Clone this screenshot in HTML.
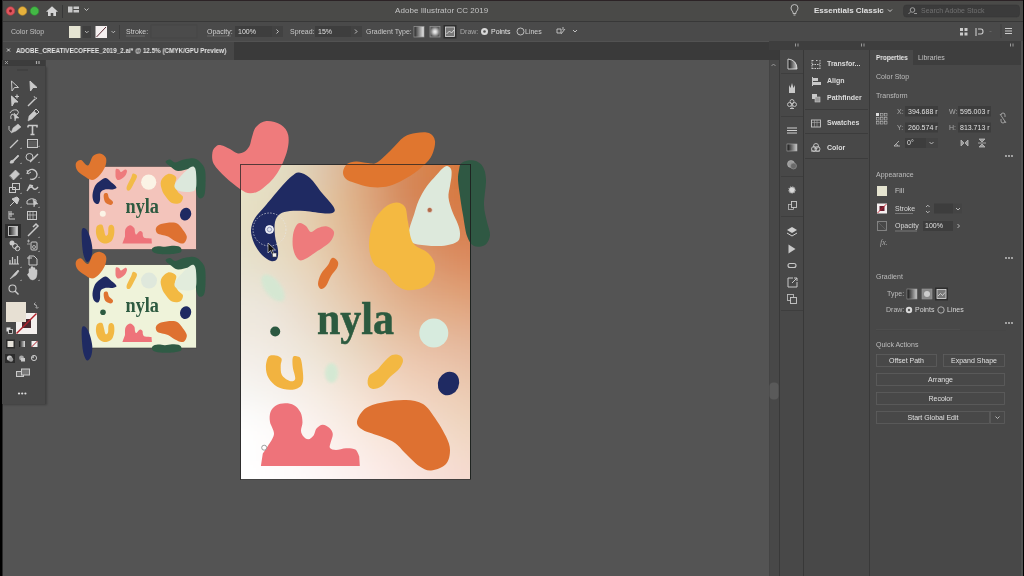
<!DOCTYPE html>
<html><head><meta charset="utf-8">
<style>
*{margin:0;padding:0;box-sizing:border-box}
html,body{width:1024px;height:576px;overflow:hidden;background:#545454;font-family:"Liberation Sans",sans-serif;color:#d8d8d8}
.a{position:absolute}
.t{position:absolute;white-space:nowrap;font-size:7px;line-height:8px;-webkit-font-smoothing:antialiased;will-change:transform}
</style></head><body>
<!-- title bar -->
<div class="a" style="left:0;top:0;width:1024px;height:21px;background:#4a4a48;border-top:1px solid #2c2326"></div>
<div class="a" style="left:0;top:21px;width:1024px;height:1px;background:#383838"></div>
<!-- control bar -->
<div class="a" style="left:0;top:22px;width:1024px;height:20px;background:#4a4a4a"></div><div class="a" style="left:0;top:40.5px;width:1024px;height:1px;background:#525252"></div>
<!-- tab bar -->
<div class="a" style="left:0;top:42px;width:1024px;height:18px;background:#3a3a3a"></div>
<div class="a" style="left:0;top:42px;width:234px;height:18px;background:#474747"></div>
<!-- left black strip -->
<div class="a" style="left:0;top:0;width:1.5px;height:576px;background:#000"></div><div class="a" style="left:1.5px;top:0;width:1px;height:576px;background:#2a2a2a"></div>

<!-- right side -->
<div class="a" style="left:768.5px;top:41px;width:255.5px;height:9px;background:#3e3e3e"></div>
<div class="a" style="left:768.5px;top:60px;width:10.5px;height:516px;background:#484848"></div>
<div class="a" style="left:768.5px;top:60px;width:1px;height:516px;background:#444"></div>
<div class="a" style="left:779px;top:50px;width:1px;height:526px;background:#393939"></div>
<div class="a" style="left:780px;top:50px;width:23px;height:526px;background:#484848"></div>
<div class="a" style="left:803px;top:50px;width:1px;height:526px;background:#383838"></div>
<div class="a" style="left:804px;top:50px;width:65px;height:526px;background:#484848"></div>
<div class="a" style="left:869px;top:50px;width:1px;height:526px;background:#393939"></div>
<div class="a" style="left:870px;top:50px;width:151px;height:526px;background:#484848"></div>
<div class="a" style="left:1021px;top:41px;width:1.5px;height:535px;background:#525252"></div>
<div class="a" style="left:1022.5px;top:0;width:1.5px;height:576px;background:#000"></div>
<div class="a" style="left:870px;top:50px;width:151px;height:15px;background:#3e3e3e"></div>
<div class="a" style="left:870px;top:50px;width:43px;height:15px;background:#484848"></div>
<!--ART--><svg class="a" style="left:0;top:0;will-change:transform" width="768" height="576" viewBox="0 0 768 576"><rect x="88.8" y="166.3" width="107.6" height="83.3" fill="#f3c4bb"/>
<rect x="88.8" y="166.3" width="107.6" height="83.3" fill="none" stroke="#3a3a3a" stroke-width="0.6"/>
<path d="M165.6,162.0 C165.4,160.8 168.4,159.4 170.0,159.5 C171.6,159.6 173.0,162.4 175.0,162.5 C177.0,162.6 179.5,160.7 182.0,160.0 C184.5,159.3 187.7,158.7 190.0,158.5 C192.3,158.3 194.2,158.2 196.0,159.0 C197.8,159.8 199.5,161.2 201.0,163.0 C202.5,164.8 204.2,166.3 205.0,170.0 C205.8,173.7 205.7,180.7 205.5,185.0 C205.3,189.3 205.1,193.8 204.0,196.0 C202.9,198.2 200.3,199.0 199.0,198.0 C197.7,197.0 196.6,194.3 196.0,190.0 C195.4,185.7 196.5,175.5 195.5,172.0 C194.5,168.5 192.9,169.2 190.0,169.0 C187.1,168.8 181.2,171.3 178.0,171.0 C174.8,170.7 173.1,168.5 171.0,167.0 C168.9,165.5 165.8,163.2 165.6,162.0Z" fill="#2f5b45"/>
<path d="M76.0,163.0 C76.7,161.3 79.0,159.6 81.0,160.0 C83.0,160.4 86.0,166.2 88.0,165.5 C90.0,164.8 91.0,158.0 93.0,156.0 C95.0,154.0 97.8,153.2 100.0,153.5 C102.2,153.8 105.2,155.8 106.0,158.0 C106.8,160.2 106.2,164.0 105.0,167.0 C103.8,170.0 101.2,173.8 99.0,176.0 C96.8,178.2 94.5,180.0 92.0,180.0 C89.5,180.0 86.5,177.7 84.0,176.0 C81.5,174.3 78.3,172.2 77.0,170.0 C75.7,167.8 75.3,164.7 76.0,163.0Z" fill="#e0762f"/>
<path d="M105.8,178.0 C107.6,178.2 109.2,180.4 111.0,182.0 C112.8,183.6 116.3,186.2 116.5,187.5 C116.7,188.8 113.9,189.2 112.0,189.5 C110.1,189.8 106.9,189.0 105.0,189.5 C103.1,190.0 101.3,190.8 100.5,192.5 C99.7,194.2 100.4,198.1 100.0,200.0 C99.6,201.9 99.0,203.7 98.0,204.0 C97.0,204.3 94.9,203.5 94.0,202.0 C93.1,200.5 92.3,197.7 92.5,195.0 C92.7,192.3 93.8,188.3 95.0,186.0 C96.2,183.7 98.2,182.3 100.0,181.0 C101.8,179.7 104.0,177.8 105.8,178.0Z" fill="#1f2a62"/>
<path d="M104.0,194.0 C104.6,193.1 106.7,192.8 107.5,193.5 C108.3,194.2 108.1,196.6 109.0,198.0 C109.9,199.4 112.7,200.8 113.0,202.0 C113.3,203.2 112.2,204.8 111.0,205.0 C109.8,205.2 107.2,204.0 106.0,203.0 C104.8,202.0 104.3,200.5 104.0,199.0 C103.7,197.5 103.4,194.9 104.0,194.0Z" fill="#df7331"/>
<path d="M116.0,169.0 C116.6,168.4 118.2,169.0 119.0,169.5 C119.8,170.0 120.0,172.0 121.0,172.0 C122.0,172.0 124.0,169.7 125.0,169.5 C126.0,169.3 127.0,169.9 127.0,171.0 C127.0,172.1 126.3,174.5 125.0,176.0 C123.7,177.5 120.5,179.7 119.0,180.0 C117.5,180.3 116.6,179.2 116.0,178.0 C115.4,176.8 115.5,174.5 115.5,173.0 C115.5,171.5 115.4,169.6 116.0,169.0Z" fill="#ee7b7c"/>
<path d="M133.0,173.5 C134.0,173.2 136.8,174.4 137.0,176.0 C137.2,177.6 135.2,180.7 134.0,183.0 C132.8,185.3 131.2,188.8 130.0,190.0 C128.8,191.2 127.5,190.7 127.0,190.0 C126.5,189.3 126.3,188.0 127.0,186.0 C127.7,184.0 130.0,180.1 131.0,178.0 C132.0,175.9 132.0,173.8 133.0,173.5Z" fill="#f2bb48"/>
<circle cx="148.7" cy="182.2" r="7.6" fill="#fbf4e6"/>
<path d="M168.0,174.0 C170.5,173.3 174.8,175.2 176.0,177.0 C177.2,178.8 174.7,182.5 175.0,185.0 C175.3,187.5 176.7,190.0 178.0,192.0 C179.3,194.0 182.7,195.2 183.0,197.0 C183.3,198.8 181.8,202.0 180.0,203.0 C178.2,204.0 174.3,204.0 172.0,203.0 C169.7,202.0 167.7,199.2 166.0,197.0 C164.3,194.8 162.8,192.7 162.0,190.0 C161.2,187.3 160.0,183.7 161.0,181.0 C162.0,178.3 165.5,174.7 168.0,174.0Z" fill="#f3b942"/>
<path d="M190.0,167.5 C192.5,166.0 193.9,165.9 195.0,168.0 C196.1,170.1 196.4,176.3 196.4,180.0 C196.4,183.7 196.7,188.0 195.0,190.0 C193.3,192.0 189.0,192.0 186.0,192.0 C183.0,192.0 178.9,191.2 177.0,190.0 C175.1,188.8 174.0,187.2 174.5,185.0 C175.0,182.8 177.4,179.9 180.0,177.0 C182.6,174.1 187.5,169.0 190.0,167.5Z" fill="#dce8dc"/>
<text x="125.5" y="213.2" font-family="Liberation Serif" font-weight="bold" font-size="19" fill="#2d5a40" transform="translate(0 213.2) scale(1 1.15) translate(0 -213.2)" textLength="33.5" lengthAdjust="spacingAndGlyphs">nyla</text>
<circle cx="102.8" cy="213.8" r="3" fill="#fbf4e6"/>
<ellipse cx="185.6" cy="214.2" rx="5.5" ry="6.5" fill="#1f2a62" transform="rotate(20 185.6 214.2)"/>
<path d="M97.0,226.0 C98.0,224.6 100.8,224.0 102.0,224.7 C103.2,225.4 103.4,228.2 104.0,230.0 C104.6,231.8 104.8,234.8 105.5,235.5 C106.2,236.2 107.5,235.4 108.0,234.0 C108.5,232.6 108.0,228.6 108.5,227.0 C109.0,225.4 110.1,224.7 111.0,224.7 C111.9,224.7 113.5,225.3 114.0,227.0 C114.5,228.7 114.5,232.6 114.0,235.0 C113.5,237.4 112.7,240.1 111.0,241.5 C109.3,242.9 106.1,243.8 104.0,243.5 C101.9,243.2 99.8,241.8 98.5,240.0 C97.2,238.2 96.2,235.3 96.0,233.0 C95.8,230.7 96.0,227.4 97.0,226.0Z" fill="#f2b843"/>
<path d="M122.4,243.5 L125,236.5 L125.0,236.5 C125.1,235.2 124.7,230.9 125.5,229.0 C126.3,227.1 128.5,225.4 129.9,225.2 C131.3,225.0 133.3,226.8 134.2,228.0 C135.0,229.2 134.7,231.4 135.0,232.5 C135.3,233.6 135.7,234.7 136.3,234.6 C136.9,234.5 137.9,232.6 138.6,232.0 C139.3,231.4 139.9,230.9 140.6,231.0 C141.2,231.1 142.1,231.7 142.5,232.5 C142.9,233.3 142.6,235.1 143.0,236.0 C143.4,236.9 143.6,237.6 145.0,238.0 C146.4,238.4 150.4,238.4 151.5,238.5 L151.9,243.5 Z" fill="#ee737a"/>
<path d="M156.0,228.0 C156.7,226.5 158.4,224.9 161.0,224.0 C163.6,223.1 169.0,222.5 171.8,222.5 C174.6,222.5 176.1,222.8 178.0,224.0 C179.9,225.2 181.5,227.9 183.0,230.0 C184.5,232.1 186.5,234.5 186.8,236.5 C187.1,238.5 185.9,240.8 185.0,242.0 C184.1,243.2 183.1,243.7 181.4,243.5 C179.7,243.3 177.2,242.2 175.0,241.0 C172.8,239.8 170.2,237.5 168.0,236.5 C165.8,235.5 163.8,235.6 162.0,235.0 C160.2,234.4 158.0,234.2 157.0,233.0 C156.0,231.8 155.3,229.5 156.0,228.0Z" fill="#de7131"/>
<path d="M82.0,229.5 C82.7,227.2 84.7,227.8 86.0,229.0 C87.3,230.2 89.0,233.8 90.0,237.0 C91.0,240.2 92.1,244.5 92.3,248.0 C92.5,251.5 91.9,255.7 91.0,258.0 C90.1,260.3 88.2,262.5 87.0,262.0 C85.8,261.5 84.3,258.2 83.5,255.0 C82.7,251.8 82.2,247.2 82.0,243.0 C81.8,238.8 81.3,231.8 82.0,229.5Z" fill="#1f2a62"/>
<path d="M152.4,248.0 C153.2,247.0 155.9,246.4 158.0,246.2 C160.1,246.0 162.7,246.9 165.0,246.8 C167.3,246.7 169.5,245.8 172.0,245.8 C174.5,245.8 178.5,246.0 180.0,247.0 C181.5,248.0 182.3,250.8 181.0,252.0 C179.7,253.2 175.5,253.7 172.0,254.0 C168.5,254.3 163.2,254.3 160.0,254.0 C156.8,253.7 154.3,253.0 153.0,252.0 C151.7,251.0 151.6,249.0 152.4,248.0Z" fill="#2f5b45"/>
<rect x="88.8" y="264.7" width="107.6" height="83.3" fill="#eff3da"/>
<rect x="88.8" y="264.7" width="107.6" height="83.3" fill="none" stroke="#3a3a3a" stroke-width="0.6"/>
<path d="M165.6,260.4 C165.4,259.1 168.4,257.8 170.0,257.9 C171.6,258.0 173.0,260.8 175.0,260.9 C177.0,261.0 179.5,259.1 182.0,258.4 C184.5,257.7 187.7,257.1 190.0,256.9 C192.3,256.7 194.2,256.6 196.0,257.4 C197.8,258.1 199.5,259.6 201.0,261.4 C202.5,263.2 204.2,264.7 205.0,268.4 C205.8,272.1 205.7,279.1 205.5,283.4 C205.3,287.7 205.1,292.2 204.0,294.4 C202.9,296.6 200.3,297.4 199.0,296.4 C197.7,295.4 196.6,292.7 196.0,288.4 C195.4,284.1 196.5,273.9 195.5,270.4 C194.5,266.9 192.9,267.6 190.0,267.4 C187.1,267.2 181.2,269.7 178.0,269.4 C174.8,269.1 173.1,266.9 171.0,265.4 C168.9,263.9 165.8,261.6 165.6,260.4Z" fill="#2f5b45"/>
<path d="M76.0,261.4 C76.7,259.7 79.0,258.0 81.0,258.4 C83.0,258.8 86.0,264.6 88.0,263.9 C90.0,263.2 91.0,256.4 93.0,254.4 C95.0,252.4 97.8,251.6 100.0,251.9 C102.2,252.2 105.2,254.1 106.0,256.4 C106.8,258.6 106.2,262.4 105.0,265.4 C103.8,268.4 101.2,272.2 99.0,274.4 C96.8,276.6 94.5,278.4 92.0,278.4 C89.5,278.4 86.5,276.1 84.0,274.4 C81.5,272.7 78.3,270.6 77.0,268.4 C75.7,266.2 75.3,263.1 76.0,261.4Z" fill="#e0762f"/>
<path d="M105.8,276.4 C107.6,276.6 109.2,278.8 111.0,280.4 C112.8,282.0 116.3,284.6 116.5,285.9 C116.7,287.1 113.9,287.6 112.0,287.9 C110.1,288.2 106.9,287.4 105.0,287.9 C103.1,288.4 101.3,289.1 100.5,290.9 C99.7,292.6 100.4,296.5 100.0,298.4 C99.6,300.3 99.0,302.1 98.0,302.4 C97.0,302.7 94.9,301.9 94.0,300.4 C93.1,298.9 92.3,296.1 92.5,293.4 C92.7,290.7 93.8,286.7 95.0,284.4 C96.2,282.1 98.2,280.7 100.0,279.4 C101.8,278.1 104.0,276.2 105.8,276.4Z" fill="#1f2a62"/>
<path d="M104.0,292.4 C104.6,291.5 106.7,291.2 107.5,291.9 C108.3,292.6 108.1,295.0 109.0,296.4 C109.9,297.8 112.7,299.2 113.0,300.4 C113.3,301.6 112.2,303.2 111.0,303.4 C109.8,303.6 107.2,302.4 106.0,301.4 C104.8,300.4 104.3,298.9 104.0,297.4 C103.7,295.9 103.4,293.3 104.0,292.4Z" fill="#df7331"/>
<path d="M116.0,267.4 C116.6,266.8 118.2,267.4 119.0,267.9 C119.8,268.4 120.0,270.4 121.0,270.4 C122.0,270.4 124.0,268.1 125.0,267.9 C126.0,267.7 127.0,268.3 127.0,269.4 C127.0,270.5 126.3,272.9 125.0,274.4 C123.7,275.9 120.5,278.1 119.0,278.4 C117.5,278.7 116.6,277.6 116.0,276.4 C115.4,275.2 115.5,272.9 115.5,271.4 C115.5,269.9 115.4,268.0 116.0,267.4Z" fill="#ee7b7c"/>
<path d="M133.0,271.9 C134.0,271.6 136.8,272.8 137.0,274.4 C137.2,276.0 135.2,279.1 134.0,281.4 C132.8,283.7 131.2,287.2 130.0,288.4 C128.8,289.6 127.5,289.1 127.0,288.4 C126.5,287.7 126.3,286.4 127.0,284.4 C127.7,282.4 130.0,278.5 131.0,276.4 C132.0,274.3 132.0,272.2 133.0,271.9Z" fill="#f2bb48"/>
<circle cx="149" cy="280.6" r="8" fill="#dfe8dc"/>
<path d="M168.0,272.4 C170.5,271.7 174.8,273.6 176.0,275.4 C177.2,277.2 174.7,280.9 175.0,283.4 C175.3,285.9 176.7,288.4 178.0,290.4 C179.3,292.4 182.7,293.6 183.0,295.4 C183.3,297.2 181.8,300.4 180.0,301.4 C178.2,302.4 174.3,302.4 172.0,301.4 C169.7,300.4 167.7,297.6 166.0,295.4 C164.3,293.2 162.8,291.1 162.0,288.4 C161.2,285.7 160.0,282.1 161.0,279.4 C162.0,276.7 165.5,273.1 168.0,272.4Z" fill="#f3b942"/>
<path d="M190.0,265.9 C192.5,264.4 193.9,264.3 195.0,266.4 C196.1,268.5 196.4,274.7 196.4,278.4 C196.4,282.1 196.7,286.4 195.0,288.4 C193.3,290.4 189.0,290.4 186.0,290.4 C183.0,290.4 178.9,289.6 177.0,288.4 C175.1,287.2 174.0,285.6 174.5,283.4 C175.0,281.2 177.4,278.3 180.0,275.4 C182.6,272.5 187.5,267.4 190.0,265.9Z" fill="#e2ecdc"/>
<text x="125.5" y="311.6" font-family="Liberation Serif" font-weight="bold" font-size="19" fill="#2d5a40" transform="translate(0 311.6) scale(1 1.15) translate(0 -311.6)" textLength="33.5" lengthAdjust="spacingAndGlyphs">nyla</text>
<circle cx="103" cy="312.2" r="2.8" fill="#2d5a40"/>
<ellipse cx="185.6" cy="312.6" rx="5.5" ry="6.5" fill="#1f2a62" transform="rotate(20 185.6 312.6)"/>
<path d="M97.0,324.4 C98.0,323.0 100.8,322.4 102.0,323.1 C103.2,323.8 103.4,326.6 104.0,328.4 C104.6,330.2 104.8,333.2 105.5,333.9 C106.2,334.6 107.5,333.8 108.0,332.4 C108.5,331.0 108.0,326.9 108.5,325.4 C109.0,323.8 110.1,323.1 111.0,323.1 C111.9,323.1 113.5,323.7 114.0,325.4 C114.5,327.1 114.5,331.0 114.0,333.4 C113.5,335.8 112.7,338.5 111.0,339.9 C109.3,341.3 106.1,342.1 104.0,341.9 C101.9,341.6 99.8,340.1 98.5,338.4 C97.2,336.6 96.2,333.7 96.0,331.4 C95.8,329.1 96.0,325.8 97.0,324.4Z" fill="#f2b843"/>
<path d="M122.4,341.9 L125,334.9 L125.0,334.9 C125.1,333.6 124.7,329.3 125.5,327.4 C126.3,325.5 128.5,323.8 129.9,323.6 C131.3,323.4 133.3,325.2 134.2,326.4 C135.0,327.6 134.7,329.8 135.0,330.9 C135.3,332.0 135.7,333.1 136.3,333.0 C136.9,332.9 137.9,331.0 138.6,330.4 C139.3,329.8 139.9,329.3 140.6,329.4 C141.2,329.5 142.1,330.1 142.5,330.9 C142.9,331.7 142.6,333.5 143.0,334.4 C143.4,335.3 143.6,336.0 145.0,336.4 C146.4,336.8 150.4,336.8 151.5,336.9 L151.9,341.9 Z" fill="#ee737a"/>
<path d="M156.0,326.4 C156.7,324.9 158.4,323.3 161.0,322.4 C163.6,321.5 169.0,320.9 171.8,320.9 C174.6,320.9 176.1,321.1 178.0,322.4 C179.9,323.6 181.5,326.3 183.0,328.4 C184.5,330.5 186.5,332.9 186.8,334.9 C187.1,336.9 185.9,339.2 185.0,340.4 C184.1,341.6 183.1,342.1 181.4,341.9 C179.7,341.7 177.2,340.6 175.0,339.4 C172.8,338.2 170.2,335.9 168.0,334.9 C165.8,333.9 163.8,334.0 162.0,333.4 C160.2,332.8 158.0,332.6 157.0,331.4 C156.0,330.2 155.3,327.9 156.0,326.4Z" fill="#de7131"/>
<path d="M82.0,327.9 C82.7,325.6 84.7,326.1 86.0,327.4 C87.3,328.6 89.0,332.2 90.0,335.4 C91.0,338.6 92.1,342.9 92.3,346.4 C92.5,349.9 91.9,354.1 91.0,356.4 C90.1,358.7 88.2,360.9 87.0,360.4 C85.8,359.9 84.3,356.6 83.5,353.4 C82.7,350.2 82.2,345.6 82.0,341.4 C81.8,337.1 81.3,330.2 82.0,327.9Z" fill="#1f2a62"/>
<path d="M152.4,346.4 C153.2,345.4 155.9,344.8 158.0,344.6 C160.1,344.4 162.7,345.3 165.0,345.2 C167.3,345.1 169.5,344.2 172.0,344.2 C174.5,344.2 178.5,344.4 180.0,345.4 C181.5,346.4 182.3,349.2 181.0,350.4 C179.7,351.6 175.5,352.1 172.0,352.4 C168.5,352.7 163.2,352.7 160.0,352.4 C156.8,352.1 154.3,351.4 153.0,350.4 C151.7,349.4 151.6,347.4 152.4,346.4Z" fill="#2f5b45"/>
<defs>
<linearGradient id="abTop" x1="0" y1="0" x2="1" y2="0"><stop offset="0" stop-color="#eee4c6"/><stop offset="0.55" stop-color="#e9c7a2"/><stop offset="1" stop-color="#d9804a"/></linearGradient>
<linearGradient id="abBot" x1="0" y1="0" x2="1" y2="0"><stop offset="0" stop-color="#fefcf9"/><stop offset="1" stop-color="#f2dccd"/></linearGradient>
<linearGradient id="abMaskG" x1="0" y1="0" x2="0" y2="1"><stop offset="0" stop-color="#fff"/><stop offset="1" stop-color="#000"/></linearGradient>
<mask id="abMask"><rect x="241" y="164" width="229.5" height="315" fill="url(#abMaskG)"/></mask>
<radialGradient id="abTR" cx="470" cy="170" r="170" gradientUnits="userSpaceOnUse"><stop offset="0" stop-color="#d9804a" stop-opacity="0.9"/><stop offset="0.5" stop-color="#e09a6e" stop-opacity="0.45"/><stop offset="1" stop-color="#e8b08a" stop-opacity="0"/></radialGradient>
<filter id="blur2" x="-50%" y="-50%" width="200%" height="200%"><feGaussianBlur stdDeviation="1.8"/></filter>
</defs>
<defs><filter id="gblur" x="-10%" y="-10%" width="120%" height="120%"><feGaussianBlur stdDeviation="6"/></filter><clipPath id="abclip"><rect x="241" y="165" width="229.5" height="314.5"/></clipPath></defs><g clip-path="url(#abclip)"><g filter="url(#gblur)"><rect x="205" y="129" width="13" height="13" fill="#e4e4c9"/><rect x="217" y="129" width="13" height="13" fill="#e4e4c9"/><rect x="229" y="129" width="13" height="13" fill="#e4e4c9"/><rect x="241" y="129" width="13" height="13" fill="#e4e3c8"/><rect x="253" y="129" width="13" height="13" fill="#e3e0c6"/><rect x="265" y="129" width="13" height="13" fill="#e3dec4"/><rect x="277" y="129" width="13" height="13" fill="#e2dbc2"/><rect x="289" y="129" width="13" height="13" fill="#e1d6bd"/><rect x="301" y="129" width="13" height="13" fill="#e0d0b6"/><rect x="313" y="129" width="13" height="13" fill="#dec8ad"/><rect x="325" y="129" width="13" height="13" fill="#ddc0a2"/><rect x="337" y="129" width="13" height="13" fill="#dcb796"/><rect x="349" y="129" width="13" height="13" fill="#dbae89"/><rect x="361" y="129" width="13" height="13" fill="#daa57d"/><rect x="373" y="129" width="13" height="13" fill="#d99c72"/><rect x="385" y="129" width="13" height="13" fill="#d79467"/><rect x="397" y="129" width="13" height="13" fill="#d78d5d"/><rect x="409" y="129" width="13" height="13" fill="#d78755"/><rect x="421" y="129" width="13" height="13" fill="#d7834d"/><rect x="433" y="129" width="13" height="13" fill="#d88047"/><rect x="445" y="129" width="13" height="13" fill="#d87c42"/><rect x="457" y="129" width="13" height="13" fill="#d8793d"/><rect x="469" y="129" width="13" height="13" fill="#d8773a"/><rect x="481" y="129" width="13" height="13" fill="#d8773a"/><rect x="493" y="129" width="13" height="13" fill="#d8773a"/><rect x="505" y="129" width="13" height="13" fill="#d8773a"/><rect x="205" y="141" width="13" height="13" fill="#e4e4c9"/><rect x="217" y="141" width="13" height="13" fill="#e4e4c9"/><rect x="229" y="141" width="13" height="13" fill="#e4e4c9"/><rect x="241" y="141" width="13" height="13" fill="#e4e3c8"/><rect x="253" y="141" width="13" height="13" fill="#e3e0c6"/><rect x="265" y="141" width="13" height="13" fill="#e3dec4"/><rect x="277" y="141" width="13" height="13" fill="#e2dbc2"/><rect x="289" y="141" width="13" height="13" fill="#e1d6bd"/><rect x="301" y="141" width="13" height="13" fill="#e0d0b6"/><rect x="313" y="141" width="13" height="13" fill="#dec8ad"/><rect x="325" y="141" width="13" height="13" fill="#ddc0a2"/><rect x="337" y="141" width="13" height="13" fill="#dcb796"/><rect x="349" y="141" width="13" height="13" fill="#dbae89"/><rect x="361" y="141" width="13" height="13" fill="#daa57d"/><rect x="373" y="141" width="13" height="13" fill="#d99c72"/><rect x="385" y="141" width="13" height="13" fill="#d79467"/><rect x="397" y="141" width="13" height="13" fill="#d78d5d"/><rect x="409" y="141" width="13" height="13" fill="#d78755"/><rect x="421" y="141" width="13" height="13" fill="#d7834d"/><rect x="433" y="141" width="13" height="13" fill="#d88047"/><rect x="445" y="141" width="13" height="13" fill="#d87c42"/><rect x="457" y="141" width="13" height="13" fill="#d8793d"/><rect x="469" y="141" width="13" height="13" fill="#d8773a"/><rect x="481" y="141" width="13" height="13" fill="#d8773a"/><rect x="493" y="141" width="13" height="13" fill="#d8773a"/><rect x="505" y="141" width="13" height="13" fill="#d8773a"/><rect x="205" y="153" width="13" height="13" fill="#e4e4c9"/><rect x="217" y="153" width="13" height="13" fill="#e4e4c9"/><rect x="229" y="153" width="13" height="13" fill="#e4e4c9"/><rect x="241" y="153" width="13" height="13" fill="#e4e3c8"/><rect x="253" y="153" width="13" height="13" fill="#e3e0c6"/><rect x="265" y="153" width="13" height="13" fill="#e3dec4"/><rect x="277" y="153" width="13" height="13" fill="#e2dbc2"/><rect x="289" y="153" width="13" height="13" fill="#e1d6bd"/><rect x="301" y="153" width="13" height="13" fill="#e0d0b6"/><rect x="313" y="153" width="13" height="13" fill="#dec8ad"/><rect x="325" y="153" width="13" height="13" fill="#ddc0a2"/><rect x="337" y="153" width="13" height="13" fill="#dcb796"/><rect x="349" y="153" width="13" height="13" fill="#dbae89"/><rect x="361" y="153" width="13" height="13" fill="#daa57d"/><rect x="373" y="153" width="13" height="13" fill="#d99c72"/><rect x="385" y="153" width="13" height="13" fill="#d79467"/><rect x="397" y="153" width="13" height="13" fill="#d78d5d"/><rect x="409" y="153" width="13" height="13" fill="#d78755"/><rect x="421" y="153" width="13" height="13" fill="#d7834d"/><rect x="433" y="153" width="13" height="13" fill="#d88047"/><rect x="445" y="153" width="13" height="13" fill="#d87c42"/><rect x="457" y="153" width="13" height="13" fill="#d8793d"/><rect x="469" y="153" width="13" height="13" fill="#d8773a"/><rect x="481" y="153" width="13" height="13" fill="#d8773a"/><rect x="493" y="153" width="13" height="13" fill="#d8773a"/><rect x="505" y="153" width="13" height="13" fill="#d8773a"/><rect x="205" y="165" width="13" height="13" fill="#e5e4c9"/><rect x="217" y="165" width="13" height="13" fill="#e5e4c9"/><rect x="229" y="165" width="13" height="13" fill="#e5e4c9"/><rect x="241" y="165" width="13" height="13" fill="#e4e2c8"/><rect x="253" y="165" width="13" height="13" fill="#e4e0c6"/><rect x="265" y="165" width="13" height="13" fill="#e3dec4"/><rect x="277" y="165" width="13" height="13" fill="#e2dbc1"/><rect x="289" y="165" width="13" height="13" fill="#e1d6bd"/><rect x="301" y="165" width="13" height="13" fill="#e0d0b6"/><rect x="313" y="165" width="13" height="13" fill="#dfc8ad"/><rect x="325" y="165" width="13" height="13" fill="#dec0a2"/><rect x="337" y="165" width="13" height="13" fill="#ddb795"/><rect x="349" y="165" width="13" height="13" fill="#dcae89"/><rect x="361" y="165" width="13" height="13" fill="#daa57d"/><rect x="373" y="165" width="13" height="13" fill="#d99c72"/><rect x="385" y="165" width="13" height="13" fill="#d79467"/><rect x="397" y="165" width="13" height="13" fill="#d78c5d"/><rect x="409" y="165" width="13" height="13" fill="#d68755"/><rect x="421" y="165" width="13" height="13" fill="#d7834e"/><rect x="433" y="165" width="13" height="13" fill="#d77f48"/><rect x="445" y="165" width="13" height="13" fill="#d87c42"/><rect x="457" y="165" width="13" height="13" fill="#d8793e"/><rect x="469" y="165" width="13" height="13" fill="#d7773b"/><rect x="481" y="165" width="13" height="13" fill="#d7773b"/><rect x="493" y="165" width="13" height="13" fill="#d7773b"/><rect x="505" y="165" width="13" height="13" fill="#d7773b"/><rect x="205" y="177" width="13" height="13" fill="#e5e3c7"/><rect x="217" y="177" width="13" height="13" fill="#e5e3c7"/><rect x="229" y="177" width="13" height="13" fill="#e5e3c7"/><rect x="241" y="177" width="13" height="13" fill="#e5e2c6"/><rect x="253" y="177" width="13" height="13" fill="#e4e0c4"/><rect x="265" y="177" width="13" height="13" fill="#e4ddc2"/><rect x="277" y="177" width="13" height="13" fill="#e3dac0"/><rect x="289" y="177" width="13" height="13" fill="#e2d6bb"/><rect x="301" y="177" width="13" height="13" fill="#e1d0b4"/><rect x="313" y="177" width="13" height="13" fill="#e0c8ab"/><rect x="325" y="177" width="13" height="13" fill="#dfc0a0"/><rect x="337" y="177" width="13" height="13" fill="#deb894"/><rect x="349" y="177" width="13" height="13" fill="#ddaf88"/><rect x="361" y="177" width="13" height="13" fill="#dba57d"/><rect x="373" y="177" width="13" height="13" fill="#d99c72"/><rect x="385" y="177" width="13" height="13" fill="#d79367"/><rect x="397" y="177" width="13" height="13" fill="#d68b5d"/><rect x="409" y="177" width="13" height="13" fill="#d68655"/><rect x="421" y="177" width="13" height="13" fill="#d6824f"/><rect x="433" y="177" width="13" height="13" fill="#d77f49"/><rect x="445" y="177" width="13" height="13" fill="#d77c44"/><rect x="457" y="177" width="13" height="13" fill="#d77940"/><rect x="469" y="177" width="13" height="13" fill="#d7783e"/><rect x="481" y="177" width="13" height="13" fill="#d7783e"/><rect x="493" y="177" width="13" height="13" fill="#d7783e"/><rect x="505" y="177" width="13" height="13" fill="#d7783e"/><rect x="205" y="189" width="13" height="13" fill="#e6e2c6"/><rect x="217" y="189" width="13" height="13" fill="#e6e2c6"/><rect x="229" y="189" width="13" height="13" fill="#e6e2c6"/><rect x="241" y="189" width="13" height="13" fill="#e5e1c5"/><rect x="253" y="189" width="13" height="13" fill="#e5dfc3"/><rect x="265" y="189" width="13" height="13" fill="#e4dcc1"/><rect x="277" y="189" width="13" height="13" fill="#e4d9be"/><rect x="289" y="189" width="13" height="13" fill="#e3d5b9"/><rect x="301" y="189" width="13" height="13" fill="#e2cfb2"/><rect x="313" y="189" width="13" height="13" fill="#e1c9a9"/><rect x="325" y="189" width="13" height="13" fill="#e1c19e"/><rect x="337" y="189" width="13" height="13" fill="#dfb893"/><rect x="349" y="189" width="13" height="13" fill="#deaf88"/><rect x="361" y="189" width="13" height="13" fill="#dca67d"/><rect x="373" y="189" width="13" height="13" fill="#da9d73"/><rect x="385" y="189" width="13" height="13" fill="#d89468"/><rect x="397" y="189" width="13" height="13" fill="#d68c5f"/><rect x="409" y="189" width="13" height="13" fill="#d68657"/><rect x="421" y="189" width="13" height="13" fill="#d68251"/><rect x="433" y="189" width="13" height="13" fill="#d67f4c"/><rect x="445" y="189" width="13" height="13" fill="#d77d47"/><rect x="457" y="189" width="13" height="13" fill="#d77a43"/><rect x="469" y="189" width="13" height="13" fill="#d77941"/><rect x="481" y="189" width="13" height="13" fill="#d77941"/><rect x="493" y="189" width="13" height="13" fill="#d77941"/><rect x="505" y="189" width="13" height="13" fill="#d77941"/><rect x="205" y="201" width="13" height="13" fill="#e6e1c6"/><rect x="217" y="201" width="13" height="13" fill="#e6e1c6"/><rect x="229" y="201" width="13" height="13" fill="#e6e1c6"/><rect x="241" y="201" width="13" height="13" fill="#e6e0c4"/><rect x="253" y="201" width="13" height="13" fill="#e5dec2"/><rect x="265" y="201" width="13" height="13" fill="#e5dbc0"/><rect x="277" y="201" width="13" height="13" fill="#e4d8bc"/><rect x="289" y="201" width="13" height="13" fill="#e4d4b7"/><rect x="301" y="201" width="13" height="13" fill="#e3cfb1"/><rect x="313" y="201" width="13" height="13" fill="#e2c9a8"/><rect x="325" y="201" width="13" height="13" fill="#e1c19e"/><rect x="337" y="201" width="13" height="13" fill="#e0b993"/><rect x="349" y="201" width="13" height="13" fill="#deb189"/><rect x="361" y="201" width="13" height="13" fill="#dca87f"/><rect x="373" y="201" width="13" height="13" fill="#da9e75"/><rect x="385" y="201" width="13" height="13" fill="#d8966b"/><rect x="397" y="201" width="13" height="13" fill="#d78e62"/><rect x="409" y="201" width="13" height="13" fill="#d6885b"/><rect x="421" y="201" width="13" height="13" fill="#d68454"/><rect x="433" y="201" width="13" height="13" fill="#d7814f"/><rect x="445" y="201" width="13" height="13" fill="#d77e4b"/><rect x="457" y="201" width="13" height="13" fill="#d77c47"/><rect x="469" y="201" width="13" height="13" fill="#d77a45"/><rect x="481" y="201" width="13" height="13" fill="#d77a45"/><rect x="493" y="201" width="13" height="13" fill="#d77a45"/><rect x="505" y="201" width="13" height="13" fill="#d77a45"/><rect x="205" y="213" width="13" height="13" fill="#e6e1c6"/><rect x="217" y="213" width="13" height="13" fill="#e6e1c6"/><rect x="229" y="213" width="13" height="13" fill="#e6e1c6"/><rect x="241" y="213" width="13" height="13" fill="#e6e0c5"/><rect x="253" y="213" width="13" height="13" fill="#e5ddc2"/><rect x="265" y="213" width="13" height="13" fill="#e5dbbf"/><rect x="277" y="213" width="13" height="13" fill="#e5d8bc"/><rect x="289" y="213" width="13" height="13" fill="#e4d4b7"/><rect x="301" y="213" width="13" height="13" fill="#e4cfb0"/><rect x="313" y="213" width="13" height="13" fill="#e3c9a8"/><rect x="325" y="213" width="13" height="13" fill="#e2c29f"/><rect x="337" y="213" width="13" height="13" fill="#e1bb96"/><rect x="349" y="213" width="13" height="13" fill="#dfb28c"/><rect x="361" y="213" width="13" height="13" fill="#ddaa82"/><rect x="373" y="213" width="13" height="13" fill="#dba178"/><rect x="385" y="213" width="13" height="13" fill="#d9996f"/><rect x="397" y="213" width="13" height="13" fill="#d89266"/><rect x="409" y="213" width="13" height="13" fill="#d78c5f"/><rect x="421" y="213" width="13" height="13" fill="#d78759"/><rect x="433" y="213" width="13" height="13" fill="#d78354"/><rect x="445" y="213" width="13" height="13" fill="#d78150"/><rect x="457" y="213" width="13" height="13" fill="#d87e4c"/><rect x="469" y="213" width="13" height="13" fill="#d87d4a"/><rect x="481" y="213" width="13" height="13" fill="#d87d4a"/><rect x="493" y="213" width="13" height="13" fill="#d87d4a"/><rect x="505" y="213" width="13" height="13" fill="#d87d4a"/><rect x="205" y="225" width="13" height="13" fill="#e6e1c7"/><rect x="217" y="225" width="13" height="13" fill="#e6e1c7"/><rect x="229" y="225" width="13" height="13" fill="#e6e1c7"/><rect x="241" y="225" width="13" height="13" fill="#e6e0c6"/><rect x="253" y="225" width="13" height="13" fill="#e5ddc3"/><rect x="265" y="225" width="13" height="13" fill="#e5dbc0"/><rect x="277" y="225" width="13" height="13" fill="#e5d8bc"/><rect x="289" y="225" width="13" height="13" fill="#e5d4b8"/><rect x="301" y="225" width="13" height="13" fill="#e4cfb1"/><rect x="313" y="225" width="13" height="13" fill="#e4caaa"/><rect x="325" y="225" width="13" height="13" fill="#e3c3a1"/><rect x="337" y="225" width="13" height="13" fill="#e1bc98"/><rect x="349" y="225" width="13" height="13" fill="#e0b58f"/><rect x="361" y="225" width="13" height="13" fill="#deac86"/><rect x="373" y="225" width="13" height="13" fill="#dca47c"/><rect x="385" y="225" width="13" height="13" fill="#db9c73"/><rect x="397" y="225" width="13" height="13" fill="#d9966b"/><rect x="409" y="225" width="13" height="13" fill="#d99064"/><rect x="421" y="225" width="13" height="13" fill="#d88b5e"/><rect x="433" y="225" width="13" height="13" fill="#d88759"/><rect x="445" y="225" width="13" height="13" fill="#d88455"/><rect x="457" y="225" width="13" height="13" fill="#d88251"/><rect x="469" y="225" width="13" height="13" fill="#d8804f"/><rect x="481" y="225" width="13" height="13" fill="#d8804f"/><rect x="493" y="225" width="13" height="13" fill="#d8804f"/><rect x="505" y="225" width="13" height="13" fill="#d8804f"/><rect x="205" y="237" width="13" height="13" fill="#e6e1c9"/><rect x="217" y="237" width="13" height="13" fill="#e6e1c9"/><rect x="229" y="237" width="13" height="13" fill="#e6e1c9"/><rect x="241" y="237" width="13" height="13" fill="#e6e0c8"/><rect x="253" y="237" width="13" height="13" fill="#e6dec5"/><rect x="265" y="237" width="13" height="13" fill="#e6dbc2"/><rect x="277" y="237" width="13" height="13" fill="#e6d8be"/><rect x="289" y="237" width="13" height="13" fill="#e5d5b9"/><rect x="301" y="237" width="13" height="13" fill="#e5d0b3"/><rect x="313" y="237" width="13" height="13" fill="#e4cbac"/><rect x="325" y="237" width="13" height="13" fill="#e3c5a4"/><rect x="337" y="237" width="13" height="13" fill="#e2be9c"/><rect x="349" y="237" width="13" height="13" fill="#e1b793"/><rect x="361" y="237" width="13" height="13" fill="#dfaf8a"/><rect x="373" y="237" width="13" height="13" fill="#dda881"/><rect x="385" y="237" width="13" height="13" fill="#dca178"/><rect x="397" y="237" width="13" height="13" fill="#db9a71"/><rect x="409" y="237" width="13" height="13" fill="#da946a"/><rect x="421" y="237" width="13" height="13" fill="#d99064"/><rect x="433" y="237" width="13" height="13" fill="#d98c5f"/><rect x="445" y="237" width="13" height="13" fill="#d9885b"/><rect x="457" y="237" width="13" height="13" fill="#d98658"/><rect x="469" y="237" width="13" height="13" fill="#d98456"/><rect x="481" y="237" width="13" height="13" fill="#d98456"/><rect x="493" y="237" width="13" height="13" fill="#d98456"/><rect x="505" y="237" width="13" height="13" fill="#d98456"/><rect x="205" y="249" width="13" height="13" fill="#e6e2cc"/><rect x="217" y="249" width="13" height="13" fill="#e6e2cc"/><rect x="229" y="249" width="13" height="13" fill="#e6e2cc"/><rect x="241" y="249" width="13" height="13" fill="#e6e1cb"/><rect x="253" y="249" width="13" height="13" fill="#e6dfc8"/><rect x="265" y="249" width="13" height="13" fill="#e6dcc5"/><rect x="277" y="249" width="13" height="13" fill="#e6dac1"/><rect x="289" y="249" width="13" height="13" fill="#e6d6bc"/><rect x="301" y="249" width="13" height="13" fill="#e6d2b6"/><rect x="313" y="249" width="13" height="13" fill="#e5cdaf"/><rect x="325" y="249" width="13" height="13" fill="#e4c7a8"/><rect x="337" y="249" width="13" height="13" fill="#e3c19f"/><rect x="349" y="249" width="13" height="13" fill="#e2ba97"/><rect x="361" y="249" width="13" height="13" fill="#e0b38e"/><rect x="373" y="249" width="13" height="13" fill="#dfac86"/><rect x="385" y="249" width="13" height="13" fill="#dda57e"/><rect x="397" y="249" width="13" height="13" fill="#dc9f76"/><rect x="409" y="249" width="13" height="13" fill="#db9970"/><rect x="421" y="249" width="13" height="13" fill="#db956b"/><rect x="433" y="249" width="13" height="13" fill="#da9166"/><rect x="445" y="249" width="13" height="13" fill="#da8e62"/><rect x="457" y="249" width="13" height="13" fill="#da8b5e"/><rect x="469" y="249" width="13" height="13" fill="#da895c"/><rect x="481" y="249" width="13" height="13" fill="#da895c"/><rect x="493" y="249" width="13" height="13" fill="#da895c"/><rect x="505" y="249" width="13" height="13" fill="#da895c"/><rect x="205" y="261" width="13" height="13" fill="#e7e3d0"/><rect x="217" y="261" width="13" height="13" fill="#e7e3d0"/><rect x="229" y="261" width="13" height="13" fill="#e7e3d0"/><rect x="241" y="261" width="13" height="13" fill="#e7e2ce"/><rect x="253" y="261" width="13" height="13" fill="#e7e0cc"/><rect x="265" y="261" width="13" height="13" fill="#e7dec9"/><rect x="277" y="261" width="13" height="13" fill="#e7dbc5"/><rect x="289" y="261" width="13" height="13" fill="#e7d8c0"/><rect x="301" y="261" width="13" height="13" fill="#e7d4ba"/><rect x="313" y="261" width="13" height="13" fill="#e6cfb3"/><rect x="325" y="261" width="13" height="13" fill="#e5c9ac"/><rect x="337" y="261" width="13" height="13" fill="#e4c3a4"/><rect x="349" y="261" width="13" height="13" fill="#e2bd9b"/><rect x="361" y="261" width="13" height="13" fill="#e1b693"/><rect x="373" y="261" width="13" height="13" fill="#e0af8b"/><rect x="385" y="261" width="13" height="13" fill="#dea983"/><rect x="397" y="261" width="13" height="13" fill="#dda47c"/><rect x="409" y="261" width="13" height="13" fill="#dd9f76"/><rect x="421" y="261" width="13" height="13" fill="#dc9a71"/><rect x="433" y="261" width="13" height="13" fill="#dc976d"/><rect x="445" y="261" width="13" height="13" fill="#dc9369"/><rect x="457" y="261" width="13" height="13" fill="#dc9065"/><rect x="469" y="261" width="13" height="13" fill="#dc8f63"/><rect x="481" y="261" width="13" height="13" fill="#dc8f63"/><rect x="493" y="261" width="13" height="13" fill="#dc8f63"/><rect x="505" y="261" width="13" height="13" fill="#dc8f63"/><rect x="205" y="273" width="13" height="13" fill="#e9e4d4"/><rect x="217" y="273" width="13" height="13" fill="#e9e4d4"/><rect x="229" y="273" width="13" height="13" fill="#e9e4d4"/><rect x="241" y="273" width="13" height="13" fill="#e9e3d3"/><rect x="253" y="273" width="13" height="13" fill="#e8e2d1"/><rect x="265" y="273" width="13" height="13" fill="#e8e0ce"/><rect x="277" y="273" width="13" height="13" fill="#e8ddca"/><rect x="289" y="273" width="13" height="13" fill="#e8dac5"/><rect x="301" y="273" width="13" height="13" fill="#e8d6bf"/><rect x="313" y="273" width="13" height="13" fill="#e7d1b8"/><rect x="325" y="273" width="13" height="13" fill="#e6ccb0"/><rect x="337" y="273" width="13" height="13" fill="#e4c6a8"/><rect x="349" y="273" width="13" height="13" fill="#e3c0a0"/><rect x="361" y="273" width="13" height="13" fill="#e2ba98"/><rect x="373" y="273" width="13" height="13" fill="#e1b490"/><rect x="385" y="273" width="13" height="13" fill="#e0ae89"/><rect x="397" y="273" width="13" height="13" fill="#dfa883"/><rect x="409" y="273" width="13" height="13" fill="#dea47d"/><rect x="421" y="273" width="13" height="13" fill="#dea078"/><rect x="433" y="273" width="13" height="13" fill="#de9d74"/><rect x="445" y="273" width="13" height="13" fill="#dd9a70"/><rect x="457" y="273" width="13" height="13" fill="#dd976d"/><rect x="469" y="273" width="13" height="13" fill="#dd956b"/><rect x="481" y="273" width="13" height="13" fill="#dd956b"/><rect x="493" y="273" width="13" height="13" fill="#dd956b"/><rect x="505" y="273" width="13" height="13" fill="#dd956b"/><rect x="205" y="285" width="13" height="13" fill="#eae6d8"/><rect x="217" y="285" width="13" height="13" fill="#eae6d8"/><rect x="229" y="285" width="13" height="13" fill="#eae6d8"/><rect x="241" y="285" width="13" height="13" fill="#eae5d7"/><rect x="253" y="285" width="13" height="13" fill="#eae4d5"/><rect x="265" y="285" width="13" height="13" fill="#e9e2d3"/><rect x="277" y="285" width="13" height="13" fill="#e9dfce"/><rect x="289" y="285" width="13" height="13" fill="#e9dcc9"/><rect x="301" y="285" width="13" height="13" fill="#e8d8c3"/><rect x="313" y="285" width="13" height="13" fill="#e7d4bc"/><rect x="325" y="285" width="13" height="13" fill="#e6cfb5"/><rect x="337" y="285" width="13" height="13" fill="#e5c9ad"/><rect x="349" y="285" width="13" height="13" fill="#e4c4a6"/><rect x="361" y="285" width="13" height="13" fill="#e3be9e"/><rect x="373" y="285" width="13" height="13" fill="#e2b896"/><rect x="385" y="285" width="13" height="13" fill="#e1b28f"/><rect x="397" y="285" width="13" height="13" fill="#e0ad89"/><rect x="409" y="285" width="13" height="13" fill="#dfa984"/><rect x="421" y="285" width="13" height="13" fill="#dfa67f"/><rect x="433" y="285" width="13" height="13" fill="#dfa37c"/><rect x="445" y="285" width="13" height="13" fill="#dfa178"/><rect x="457" y="285" width="13" height="13" fill="#df9e75"/><rect x="469" y="285" width="13" height="13" fill="#df9c73"/><rect x="481" y="285" width="13" height="13" fill="#df9c73"/><rect x="493" y="285" width="13" height="13" fill="#df9c73"/><rect x="505" y="285" width="13" height="13" fill="#df9c73"/><rect x="205" y="297" width="13" height="13" fill="#ece7db"/><rect x="217" y="297" width="13" height="13" fill="#ece7db"/><rect x="229" y="297" width="13" height="13" fill="#ece7db"/><rect x="241" y="297" width="13" height="13" fill="#ece7db"/><rect x="253" y="297" width="13" height="13" fill="#ebe5da"/><rect x="265" y="297" width="13" height="13" fill="#ebe4d7"/><rect x="277" y="297" width="13" height="13" fill="#eae1d3"/><rect x="289" y="297" width="13" height="13" fill="#eadece"/><rect x="301" y="297" width="13" height="13" fill="#e9dbc8"/><rect x="313" y="297" width="13" height="13" fill="#e8d6c1"/><rect x="325" y="297" width="13" height="13" fill="#e7d2ba"/><rect x="337" y="297" width="13" height="13" fill="#e6cdb3"/><rect x="349" y="297" width="13" height="13" fill="#e5c7ab"/><rect x="361" y="297" width="13" height="13" fill="#e3c2a4"/><rect x="373" y="297" width="13" height="13" fill="#e3bc9c"/><rect x="385" y="297" width="13" height="13" fill="#e2b795"/><rect x="397" y="297" width="13" height="13" fill="#e1b28f"/><rect x="409" y="297" width="13" height="13" fill="#e1af8b"/><rect x="421" y="297" width="13" height="13" fill="#e1ac87"/><rect x="433" y="297" width="13" height="13" fill="#e1a984"/><rect x="445" y="297" width="13" height="13" fill="#e1a781"/><rect x="457" y="297" width="13" height="13" fill="#e0a47e"/><rect x="469" y="297" width="13" height="13" fill="#e0a27c"/><rect x="481" y="297" width="13" height="13" fill="#e0a27c"/><rect x="493" y="297" width="13" height="13" fill="#e0a27c"/><rect x="505" y="297" width="13" height="13" fill="#e0a27c"/><rect x="205" y="309" width="13" height="13" fill="#eee9de"/><rect x="217" y="309" width="13" height="13" fill="#eee9de"/><rect x="229" y="309" width="13" height="13" fill="#eee9de"/><rect x="241" y="309" width="13" height="13" fill="#eee8dd"/><rect x="253" y="309" width="13" height="13" fill="#ede7dd"/><rect x="265" y="309" width="13" height="13" fill="#ece5db"/><rect x="277" y="309" width="13" height="13" fill="#ece3d7"/><rect x="289" y="309" width="13" height="13" fill="#ebe0d2"/><rect x="301" y="309" width="13" height="13" fill="#eaddcc"/><rect x="313" y="309" width="13" height="13" fill="#e9d9c6"/><rect x="325" y="309" width="13" height="13" fill="#e8d5bf"/><rect x="337" y="309" width="13" height="13" fill="#e6d0b8"/><rect x="349" y="309" width="13" height="13" fill="#e5cbb1"/><rect x="361" y="309" width="13" height="13" fill="#e4c6aa"/><rect x="373" y="309" width="13" height="13" fill="#e4c1a3"/><rect x="385" y="309" width="13" height="13" fill="#e3bc9c"/><rect x="397" y="309" width="13" height="13" fill="#e3b796"/><rect x="409" y="309" width="13" height="13" fill="#e2b492"/><rect x="421" y="309" width="13" height="13" fill="#e2b18f"/><rect x="433" y="309" width="13" height="13" fill="#e2af8c"/><rect x="445" y="309" width="13" height="13" fill="#e2ad89"/><rect x="457" y="309" width="13" height="13" fill="#e2aa87"/><rect x="469" y="309" width="13" height="13" fill="#e1a885"/><rect x="481" y="309" width="13" height="13" fill="#e1a885"/><rect x="493" y="309" width="13" height="13" fill="#e1a885"/><rect x="505" y="309" width="13" height="13" fill="#e1a885"/><rect x="205" y="321" width="13" height="13" fill="#f0eae0"/><rect x="217" y="321" width="13" height="13" fill="#f0eae0"/><rect x="229" y="321" width="13" height="13" fill="#f0eae0"/><rect x="241" y="321" width="13" height="13" fill="#f0e9df"/><rect x="253" y="321" width="13" height="13" fill="#efe8df"/><rect x="265" y="321" width="13" height="13" fill="#eee7dd"/><rect x="277" y="321" width="13" height="13" fill="#ede5da"/><rect x="289" y="321" width="13" height="13" fill="#ece2d5"/><rect x="301" y="321" width="13" height="13" fill="#ebdfd0"/><rect x="313" y="321" width="13" height="13" fill="#eadcca"/><rect x="325" y="321" width="13" height="13" fill="#e9d8c4"/><rect x="337" y="321" width="13" height="13" fill="#e7d4be"/><rect x="349" y="321" width="13" height="13" fill="#e6cfb7"/><rect x="361" y="321" width="13" height="13" fill="#e6cab0"/><rect x="373" y="321" width="13" height="13" fill="#e5c5a9"/><rect x="385" y="321" width="13" height="13" fill="#e5c1a3"/><rect x="397" y="321" width="13" height="13" fill="#e4bc9e"/><rect x="409" y="321" width="13" height="13" fill="#e4b99a"/><rect x="421" y="321" width="13" height="13" fill="#e4b797"/><rect x="433" y="321" width="13" height="13" fill="#e4b595"/><rect x="445" y="321" width="13" height="13" fill="#e3b292"/><rect x="457" y="321" width="13" height="13" fill="#e3b090"/><rect x="469" y="321" width="13" height="13" fill="#e3ae8e"/><rect x="481" y="321" width="13" height="13" fill="#e3ae8e"/><rect x="493" y="321" width="13" height="13" fill="#e3ae8e"/><rect x="505" y="321" width="13" height="13" fill="#e3ae8e"/><rect x="205" y="333" width="13" height="13" fill="#f2ece3"/><rect x="217" y="333" width="13" height="13" fill="#f2ece3"/><rect x="229" y="333" width="13" height="13" fill="#f2ece3"/><rect x="241" y="333" width="13" height="13" fill="#f1ebe2"/><rect x="253" y="333" width="13" height="13" fill="#f1eae1"/><rect x="265" y="333" width="13" height="13" fill="#f0e8df"/><rect x="277" y="333" width="13" height="13" fill="#efe7dd"/><rect x="289" y="333" width="13" height="13" fill="#eee5d9"/><rect x="301" y="333" width="13" height="13" fill="#ece2d4"/><rect x="313" y="333" width="13" height="13" fill="#ebdfcf"/><rect x="325" y="333" width="13" height="13" fill="#eadbc9"/><rect x="337" y="333" width="13" height="13" fill="#e9d8c3"/><rect x="349" y="333" width="13" height="13" fill="#e8d3bd"/><rect x="361" y="333" width="13" height="13" fill="#e7cfb6"/><rect x="373" y="333" width="13" height="13" fill="#e7cab0"/><rect x="385" y="333" width="13" height="13" fill="#e7c6aa"/><rect x="397" y="333" width="13" height="13" fill="#e7c2a6"/><rect x="409" y="333" width="13" height="13" fill="#e6bfa2"/><rect x="421" y="333" width="13" height="13" fill="#e6bc9f"/><rect x="433" y="333" width="13" height="13" fill="#e6ba9d"/><rect x="445" y="333" width="13" height="13" fill="#e5b89b"/><rect x="457" y="333" width="13" height="13" fill="#e4b698"/><rect x="469" y="333" width="13" height="13" fill="#e4b496"/><rect x="481" y="333" width="13" height="13" fill="#e4b496"/><rect x="493" y="333" width="13" height="13" fill="#e4b496"/><rect x="505" y="333" width="13" height="13" fill="#e4b496"/><rect x="205" y="345" width="13" height="13" fill="#f3eee7"/><rect x="217" y="345" width="13" height="13" fill="#f3eee7"/><rect x="229" y="345" width="13" height="13" fill="#f3eee7"/><rect x="241" y="345" width="13" height="13" fill="#f2ede6"/><rect x="253" y="345" width="13" height="13" fill="#f2ece4"/><rect x="265" y="345" width="13" height="13" fill="#f1eae2"/><rect x="277" y="345" width="13" height="13" fill="#f0e9e0"/><rect x="289" y="345" width="13" height="13" fill="#efe7dc"/><rect x="301" y="345" width="13" height="13" fill="#eee5d8"/><rect x="313" y="345" width="13" height="13" fill="#ede2d3"/><rect x="325" y="345" width="13" height="13" fill="#ecdfce"/><rect x="337" y="345" width="13" height="13" fill="#eadbc8"/><rect x="349" y="345" width="13" height="13" fill="#e9d7c2"/><rect x="361" y="345" width="13" height="13" fill="#e9d3bc"/><rect x="373" y="345" width="13" height="13" fill="#e9ceb7"/><rect x="385" y="345" width="13" height="13" fill="#e9cab1"/><rect x="397" y="345" width="13" height="13" fill="#e9c7ad"/><rect x="409" y="345" width="13" height="13" fill="#e9c4a9"/><rect x="421" y="345" width="13" height="13" fill="#e8c1a7"/><rect x="433" y="345" width="13" height="13" fill="#e8bfa5"/><rect x="445" y="345" width="13" height="13" fill="#e7bda2"/><rect x="457" y="345" width="13" height="13" fill="#e6bba0"/><rect x="469" y="345" width="13" height="13" fill="#e6b99d"/><rect x="481" y="345" width="13" height="13" fill="#e6b99d"/><rect x="493" y="345" width="13" height="13" fill="#e6b99d"/><rect x="505" y="345" width="13" height="13" fill="#e6b99d"/><rect x="205" y="357" width="13" height="13" fill="#f4f0ea"/><rect x="217" y="357" width="13" height="13" fill="#f4f0ea"/><rect x="229" y="357" width="13" height="13" fill="#f4f0ea"/><rect x="241" y="357" width="13" height="13" fill="#f4efe9"/><rect x="253" y="357" width="13" height="13" fill="#f3eee8"/><rect x="265" y="357" width="13" height="13" fill="#f2ece6"/><rect x="277" y="357" width="13" height="13" fill="#f2ebe3"/><rect x="289" y="357" width="13" height="13" fill="#f1e9e0"/><rect x="301" y="357" width="13" height="13" fill="#f0e7dc"/><rect x="313" y="357" width="13" height="13" fill="#efe5d8"/><rect x="325" y="357" width="13" height="13" fill="#eee2d3"/><rect x="337" y="357" width="13" height="13" fill="#eddecd"/><rect x="349" y="357" width="13" height="13" fill="#ecdbc8"/><rect x="361" y="357" width="13" height="13" fill="#ecd7c2"/><rect x="373" y="357" width="13" height="13" fill="#ecd3bd"/><rect x="385" y="357" width="13" height="13" fill="#eccfb8"/><rect x="397" y="357" width="13" height="13" fill="#eccbb4"/><rect x="409" y="357" width="13" height="13" fill="#ecc9b0"/><rect x="421" y="357" width="13" height="13" fill="#ebc6ad"/><rect x="433" y="357" width="13" height="13" fill="#eac4ab"/><rect x="445" y="357" width="13" height="13" fill="#e9c2a9"/><rect x="457" y="357" width="13" height="13" fill="#e8c0a6"/><rect x="469" y="357" width="13" height="13" fill="#e7bea4"/><rect x="481" y="357" width="13" height="13" fill="#e7bea4"/><rect x="493" y="357" width="13" height="13" fill="#e7bea4"/><rect x="505" y="357" width="13" height="13" fill="#e7bea4"/><rect x="205" y="369" width="13" height="13" fill="#f5f2ee"/><rect x="217" y="369" width="13" height="13" fill="#f5f2ee"/><rect x="229" y="369" width="13" height="13" fill="#f5f2ee"/><rect x="241" y="369" width="13" height="13" fill="#f5f2ed"/><rect x="253" y="369" width="13" height="13" fill="#f4f0eb"/><rect x="265" y="369" width="13" height="13" fill="#f4efe9"/><rect x="277" y="369" width="13" height="13" fill="#f4ede7"/><rect x="289" y="369" width="13" height="13" fill="#f3ece4"/><rect x="301" y="369" width="13" height="13" fill="#f2eae0"/><rect x="313" y="369" width="13" height="13" fill="#f1e7dc"/><rect x="325" y="369" width="13" height="13" fill="#f0e5d7"/><rect x="337" y="369" width="13" height="13" fill="#f0e1d2"/><rect x="349" y="369" width="13" height="13" fill="#efdecd"/><rect x="361" y="369" width="13" height="13" fill="#efdac8"/><rect x="373" y="369" width="13" height="13" fill="#efd6c3"/><rect x="385" y="369" width="13" height="13" fill="#efd3be"/><rect x="397" y="369" width="13" height="13" fill="#efd0ba"/><rect x="409" y="369" width="13" height="13" fill="#eecdb6"/><rect x="421" y="369" width="13" height="13" fill="#edcbb4"/><rect x="433" y="369" width="13" height="13" fill="#ecc9b1"/><rect x="445" y="369" width="13" height="13" fill="#ebc7ae"/><rect x="457" y="369" width="13" height="13" fill="#e9c5ab"/><rect x="469" y="369" width="13" height="13" fill="#e9c3a9"/><rect x="481" y="369" width="13" height="13" fill="#e9c3a9"/><rect x="493" y="369" width="13" height="13" fill="#e9c3a9"/><rect x="505" y="369" width="13" height="13" fill="#e9c3a9"/><rect x="205" y="381" width="13" height="13" fill="#f7f5f2"/><rect x="217" y="381" width="13" height="13" fill="#f7f5f2"/><rect x="229" y="381" width="13" height="13" fill="#f7f5f2"/><rect x="241" y="381" width="13" height="13" fill="#f6f4f1"/><rect x="253" y="381" width="13" height="13" fill="#f6f3ef"/><rect x="265" y="381" width="13" height="13" fill="#f6f2ed"/><rect x="277" y="381" width="13" height="13" fill="#f5f0eb"/><rect x="289" y="381" width="13" height="13" fill="#f5eee8"/><rect x="301" y="381" width="13" height="13" fill="#f5ece4"/><rect x="313" y="381" width="13" height="13" fill="#f4eae0"/><rect x="325" y="381" width="13" height="13" fill="#f3e7dc"/><rect x="337" y="381" width="13" height="13" fill="#f2e4d7"/><rect x="349" y="381" width="13" height="13" fill="#f2e1d2"/><rect x="361" y="381" width="13" height="13" fill="#f1ddcd"/><rect x="373" y="381" width="13" height="13" fill="#f1dac8"/><rect x="385" y="381" width="13" height="13" fill="#f1d7c4"/><rect x="397" y="381" width="13" height="13" fill="#f1d4c0"/><rect x="409" y="381" width="13" height="13" fill="#f0d1bc"/><rect x="421" y="381" width="13" height="13" fill="#efcfb9"/><rect x="433" y="381" width="13" height="13" fill="#eecdb7"/><rect x="445" y="381" width="13" height="13" fill="#eccbb4"/><rect x="457" y="381" width="13" height="13" fill="#ebc9b1"/><rect x="469" y="381" width="13" height="13" fill="#eac8af"/><rect x="481" y="381" width="13" height="13" fill="#eac8af"/><rect x="493" y="381" width="13" height="13" fill="#eac8af"/><rect x="505" y="381" width="13" height="13" fill="#eac8af"/><rect x="205" y="393" width="13" height="13" fill="#f8f8f6"/><rect x="217" y="393" width="13" height="13" fill="#f8f8f6"/><rect x="229" y="393" width="13" height="13" fill="#f8f8f6"/><rect x="241" y="393" width="13" height="13" fill="#f8f7f5"/><rect x="253" y="393" width="13" height="13" fill="#f8f6f3"/><rect x="265" y="393" width="13" height="13" fill="#f8f4f1"/><rect x="277" y="393" width="13" height="13" fill="#f7f3ee"/><rect x="289" y="393" width="13" height="13" fill="#f7f1eb"/><rect x="301" y="393" width="13" height="13" fill="#f7efe8"/><rect x="313" y="393" width="13" height="13" fill="#f6ede4"/><rect x="325" y="393" width="13" height="13" fill="#f5eae0"/><rect x="337" y="393" width="13" height="13" fill="#f5e7db"/><rect x="349" y="393" width="13" height="13" fill="#f4e4d7"/><rect x="361" y="393" width="13" height="13" fill="#f4e1d2"/><rect x="373" y="393" width="13" height="13" fill="#f3ddce"/><rect x="385" y="393" width="13" height="13" fill="#f3dac9"/><rect x="397" y="393" width="13" height="13" fill="#f3d8c5"/><rect x="409" y="393" width="13" height="13" fill="#f2d5c2"/><rect x="421" y="393" width="13" height="13" fill="#f1d3bf"/><rect x="433" y="393" width="13" height="13" fill="#efd1bc"/><rect x="445" y="393" width="13" height="13" fill="#eed0b9"/><rect x="457" y="393" width="13" height="13" fill="#eccdb6"/><rect x="469" y="393" width="13" height="13" fill="#ecccb4"/><rect x="481" y="393" width="13" height="13" fill="#ecccb4"/><rect x="493" y="393" width="13" height="13" fill="#ecccb4"/><rect x="505" y="393" width="13" height="13" fill="#ecccb4"/><rect x="205" y="405" width="13" height="13" fill="#fbfbfa"/><rect x="217" y="405" width="13" height="13" fill="#fbfbfa"/><rect x="229" y="405" width="13" height="13" fill="#fbfbfa"/><rect x="241" y="405" width="13" height="13" fill="#fbfaf9"/><rect x="253" y="405" width="13" height="13" fill="#faf9f7"/><rect x="265" y="405" width="13" height="13" fill="#faf7f5"/><rect x="277" y="405" width="13" height="13" fill="#f9f5f2"/><rect x="289" y="405" width="13" height="13" fill="#f9f3ef"/><rect x="301" y="405" width="13" height="13" fill="#f9f1eb"/><rect x="313" y="405" width="13" height="13" fill="#f8efe8"/><rect x="325" y="405" width="13" height="13" fill="#f7ece4"/><rect x="337" y="405" width="13" height="13" fill="#f7e9e0"/><rect x="349" y="405" width="13" height="13" fill="#f6e6db"/><rect x="361" y="405" width="13" height="13" fill="#f6e3d7"/><rect x="373" y="405" width="13" height="13" fill="#f5e0d2"/><rect x="385" y="405" width="13" height="13" fill="#f5dece"/><rect x="397" y="405" width="13" height="13" fill="#f4dbca"/><rect x="409" y="405" width="13" height="13" fill="#f3d9c7"/><rect x="421" y="405" width="13" height="13" fill="#f2d7c4"/><rect x="433" y="405" width="13" height="13" fill="#f0d5c1"/><rect x="445" y="405" width="13" height="13" fill="#efd3be"/><rect x="457" y="405" width="13" height="13" fill="#eed1ba"/><rect x="469" y="405" width="13" height="13" fill="#edcfb8"/><rect x="481" y="405" width="13" height="13" fill="#edcfb8"/><rect x="493" y="405" width="13" height="13" fill="#edcfb8"/><rect x="505" y="405" width="13" height="13" fill="#edcfb8"/><rect x="205" y="417" width="13" height="13" fill="#fdfdfd"/><rect x="217" y="417" width="13" height="13" fill="#fdfdfd"/><rect x="229" y="417" width="13" height="13" fill="#fdfdfd"/><rect x="241" y="417" width="13" height="13" fill="#fdfdfc"/><rect x="253" y="417" width="13" height="13" fill="#fcfbfa"/><rect x="265" y="417" width="13" height="13" fill="#fcf9f8"/><rect x="277" y="417" width="13" height="13" fill="#fbf7f5"/><rect x="289" y="417" width="13" height="13" fill="#faf5f2"/><rect x="301" y="417" width="13" height="13" fill="#faf3ef"/><rect x="313" y="417" width="13" height="13" fill="#f9f1eb"/><rect x="325" y="417" width="13" height="13" fill="#f9eee7"/><rect x="337" y="417" width="13" height="13" fill="#f8ece3"/><rect x="349" y="417" width="13" height="13" fill="#f8e9df"/><rect x="361" y="417" width="13" height="13" fill="#f7e6db"/><rect x="373" y="417" width="13" height="13" fill="#f7e3d7"/><rect x="385" y="417" width="13" height="13" fill="#f6e1d3"/><rect x="397" y="417" width="13" height="13" fill="#f5decf"/><rect x="409" y="417" width="13" height="13" fill="#f4dccc"/><rect x="421" y="417" width="13" height="13" fill="#f3dac9"/><rect x="433" y="417" width="13" height="13" fill="#f2d8c6"/><rect x="445" y="417" width="13" height="13" fill="#f0d7c2"/><rect x="457" y="417" width="13" height="13" fill="#efd4bf"/><rect x="469" y="417" width="13" height="13" fill="#eed3bd"/><rect x="481" y="417" width="13" height="13" fill="#eed3bd"/><rect x="493" y="417" width="13" height="13" fill="#eed3bd"/><rect x="505" y="417" width="13" height="13" fill="#eed3bd"/><rect x="205" y="429" width="13" height="13" fill="#feffff"/><rect x="217" y="429" width="13" height="13" fill="#feffff"/><rect x="229" y="429" width="13" height="13" fill="#feffff"/><rect x="241" y="429" width="13" height="13" fill="#fefefe"/><rect x="253" y="429" width="13" height="13" fill="#fefdfc"/><rect x="265" y="429" width="13" height="13" fill="#fdfbfa"/><rect x="277" y="429" width="13" height="13" fill="#fcf9f7"/><rect x="289" y="429" width="13" height="13" fill="#fcf7f4"/><rect x="301" y="429" width="13" height="13" fill="#fbf5f1"/><rect x="313" y="429" width="13" height="13" fill="#fbf2ee"/><rect x="325" y="429" width="13" height="13" fill="#faf0eb"/><rect x="337" y="429" width="13" height="13" fill="#faede7"/><rect x="349" y="429" width="13" height="13" fill="#f9ebe3"/><rect x="361" y="429" width="13" height="13" fill="#f8e8df"/><rect x="373" y="429" width="13" height="13" fill="#f8e6db"/><rect x="385" y="429" width="13" height="13" fill="#f7e3d8"/><rect x="397" y="429" width="13" height="13" fill="#f6e1d4"/><rect x="409" y="429" width="13" height="13" fill="#f5dfd1"/><rect x="421" y="429" width="13" height="13" fill="#f4ddcd"/><rect x="433" y="429" width="13" height="13" fill="#f3dbca"/><rect x="445" y="429" width="13" height="13" fill="#f2d9c7"/><rect x="457" y="429" width="13" height="13" fill="#f1d7c3"/><rect x="469" y="429" width="13" height="13" fill="#f0d5c1"/><rect x="481" y="429" width="13" height="13" fill="#f0d5c1"/><rect x="493" y="429" width="13" height="13" fill="#f0d5c1"/><rect x="505" y="429" width="13" height="13" fill="#f0d5c1"/><rect x="205" y="441" width="13" height="13" fill="#feffff"/><rect x="217" y="441" width="13" height="13" fill="#feffff"/><rect x="229" y="441" width="13" height="13" fill="#feffff"/><rect x="241" y="441" width="13" height="13" fill="#feffff"/><rect x="253" y="441" width="13" height="13" fill="#fefdfd"/><rect x="265" y="441" width="13" height="13" fill="#fefcfb"/><rect x="277" y="441" width="13" height="13" fill="#fdfaf9"/><rect x="289" y="441" width="13" height="13" fill="#fcf8f6"/><rect x="301" y="441" width="13" height="13" fill="#fcf6f4"/><rect x="313" y="441" width="13" height="13" fill="#fcf4f1"/><rect x="325" y="441" width="13" height="13" fill="#fbf2ee"/><rect x="337" y="441" width="13" height="13" fill="#fbefea"/><rect x="349" y="441" width="13" height="13" fill="#faede7"/><rect x="361" y="441" width="13" height="13" fill="#f9eae3"/><rect x="373" y="441" width="13" height="13" fill="#f9e8df"/><rect x="385" y="441" width="13" height="13" fill="#f8e5dc"/><rect x="397" y="441" width="13" height="13" fill="#f7e3d8"/><rect x="409" y="441" width="13" height="13" fill="#f6e1d5"/><rect x="421" y="441" width="13" height="13" fill="#f5dfd2"/><rect x="433" y="441" width="13" height="13" fill="#f4ddce"/><rect x="445" y="441" width="13" height="13" fill="#f3dbcb"/><rect x="457" y="441" width="13" height="13" fill="#f2d9c8"/><rect x="469" y="441" width="13" height="13" fill="#f2d7c5"/><rect x="481" y="441" width="13" height="13" fill="#f2d7c5"/><rect x="493" y="441" width="13" height="13" fill="#f2d7c5"/><rect x="505" y="441" width="13" height="13" fill="#f2d7c5"/><rect x="205" y="453" width="13" height="13" fill="#ffffff"/><rect x="217" y="453" width="13" height="13" fill="#ffffff"/><rect x="229" y="453" width="13" height="13" fill="#ffffff"/><rect x="241" y="453" width="13" height="13" fill="#feffff"/><rect x="253" y="453" width="13" height="13" fill="#fefdfd"/><rect x="265" y="453" width="13" height="13" fill="#fefcfc"/><rect x="277" y="453" width="13" height="13" fill="#fefbfa"/><rect x="289" y="453" width="13" height="13" fill="#fdf9f8"/><rect x="301" y="453" width="13" height="13" fill="#fdf7f6"/><rect x="313" y="453" width="13" height="13" fill="#fcf5f3"/><rect x="325" y="453" width="13" height="13" fill="#fcf3f0"/><rect x="337" y="453" width="13" height="13" fill="#fbf1ed"/><rect x="349" y="453" width="13" height="13" fill="#fbeeea"/><rect x="361" y="453" width="13" height="13" fill="#faece6"/><rect x="373" y="453" width="13" height="13" fill="#fae9e3"/><rect x="385" y="453" width="13" height="13" fill="#f9e7e0"/><rect x="397" y="453" width="13" height="13" fill="#f8e4dc"/><rect x="409" y="453" width="13" height="13" fill="#f7e2d9"/><rect x="421" y="453" width="13" height="13" fill="#f6e0d6"/><rect x="433" y="453" width="13" height="13" fill="#f6ded2"/><rect x="445" y="453" width="13" height="13" fill="#f5dccf"/><rect x="457" y="453" width="13" height="13" fill="#f4dacc"/><rect x="469" y="453" width="13" height="13" fill="#f3d8c9"/><rect x="481" y="453" width="13" height="13" fill="#f3d8c9"/><rect x="493" y="453" width="13" height="13" fill="#f3d8c9"/><rect x="505" y="453" width="13" height="13" fill="#f3d8c9"/><rect x="205" y="465" width="13" height="13" fill="#ffffff"/><rect x="217" y="465" width="13" height="13" fill="#ffffff"/><rect x="229" y="465" width="13" height="13" fill="#ffffff"/><rect x="241" y="465" width="13" height="13" fill="#ffffff"/><rect x="253" y="465" width="13" height="13" fill="#fffefe"/><rect x="265" y="465" width="13" height="13" fill="#fefdfd"/><rect x="277" y="465" width="13" height="13" fill="#fefcfc"/><rect x="289" y="465" width="13" height="13" fill="#fefafa"/><rect x="301" y="465" width="13" height="13" fill="#fdf8f8"/><rect x="313" y="465" width="13" height="13" fill="#fdf6f6"/><rect x="325" y="465" width="13" height="13" fill="#fdf4f3"/><rect x="337" y="465" width="13" height="13" fill="#fcf2f0"/><rect x="349" y="465" width="13" height="13" fill="#fcf0ed"/><rect x="361" y="465" width="13" height="13" fill="#fbedea"/><rect x="373" y="465" width="13" height="13" fill="#fbebe6"/><rect x="385" y="465" width="13" height="13" fill="#fae8e3"/><rect x="397" y="465" width="13" height="13" fill="#f9e6e0"/><rect x="409" y="465" width="13" height="13" fill="#f8e3dd"/><rect x="421" y="465" width="13" height="13" fill="#f7e1d9"/><rect x="433" y="465" width="13" height="13" fill="#f6dfd6"/><rect x="445" y="465" width="13" height="13" fill="#f6dcd3"/><rect x="457" y="465" width="13" height="13" fill="#f5dacf"/><rect x="469" y="465" width="13" height="13" fill="#f4d9cd"/><rect x="481" y="465" width="13" height="13" fill="#f4d9cd"/><rect x="493" y="465" width="13" height="13" fill="#f4d9cd"/><rect x="505" y="465" width="13" height="13" fill="#f4d9cd"/><rect x="205" y="477" width="13" height="13" fill="#ffffff"/><rect x="217" y="477" width="13" height="13" fill="#ffffff"/><rect x="229" y="477" width="13" height="13" fill="#ffffff"/><rect x="241" y="477" width="13" height="13" fill="#ffffff"/><rect x="253" y="477" width="13" height="13" fill="#ffffff"/><rect x="265" y="477" width="13" height="13" fill="#fffdfe"/><rect x="277" y="477" width="13" height="13" fill="#fefcfd"/><rect x="289" y="477" width="13" height="13" fill="#fefbfb"/><rect x="301" y="477" width="13" height="13" fill="#fef9f9"/><rect x="313" y="477" width="13" height="13" fill="#fdf7f7"/><rect x="325" y="477" width="13" height="13" fill="#fdf5f5"/><rect x="337" y="477" width="13" height="13" fill="#fdf3f2"/><rect x="349" y="477" width="13" height="13" fill="#fcf1ef"/><rect x="361" y="477" width="13" height="13" fill="#fceeec"/><rect x="373" y="477" width="13" height="13" fill="#fbece9"/><rect x="385" y="477" width="13" height="13" fill="#fae9e6"/><rect x="397" y="477" width="13" height="13" fill="#fae7e2"/><rect x="409" y="477" width="13" height="13" fill="#f9e4df"/><rect x="421" y="477" width="13" height="13" fill="#f8e2dc"/><rect x="433" y="477" width="13" height="13" fill="#f7dfd9"/><rect x="445" y="477" width="13" height="13" fill="#f6ddd5"/><rect x="457" y="477" width="13" height="13" fill="#f5dad2"/><rect x="469" y="477" width="13" height="13" fill="#f5d9d0"/><rect x="481" y="477" width="13" height="13" fill="#f5d9d0"/><rect x="493" y="477" width="13" height="13" fill="#f5d9d0"/><rect x="505" y="477" width="13" height="13" fill="#f5d9d0"/><rect x="205" y="489" width="13" height="13" fill="#ffffff"/><rect x="217" y="489" width="13" height="13" fill="#ffffff"/><rect x="229" y="489" width="13" height="13" fill="#ffffff"/><rect x="241" y="489" width="13" height="13" fill="#ffffff"/><rect x="253" y="489" width="13" height="13" fill="#ffffff"/><rect x="265" y="489" width="13" height="13" fill="#fffdfe"/><rect x="277" y="489" width="13" height="13" fill="#fefcfd"/><rect x="289" y="489" width="13" height="13" fill="#fefbfb"/><rect x="301" y="489" width="13" height="13" fill="#fef9f9"/><rect x="313" y="489" width="13" height="13" fill="#fdf7f7"/><rect x="325" y="489" width="13" height="13" fill="#fdf5f5"/><rect x="337" y="489" width="13" height="13" fill="#fdf3f2"/><rect x="349" y="489" width="13" height="13" fill="#fcf1ef"/><rect x="361" y="489" width="13" height="13" fill="#fceeec"/><rect x="373" y="489" width="13" height="13" fill="#fbece9"/><rect x="385" y="489" width="13" height="13" fill="#fae9e6"/><rect x="397" y="489" width="13" height="13" fill="#fae7e2"/><rect x="409" y="489" width="13" height="13" fill="#f9e4df"/><rect x="421" y="489" width="13" height="13" fill="#f8e2dc"/><rect x="433" y="489" width="13" height="13" fill="#f7dfd9"/><rect x="445" y="489" width="13" height="13" fill="#f6ddd5"/><rect x="457" y="489" width="13" height="13" fill="#f5dad2"/><rect x="469" y="489" width="13" height="13" fill="#f5d9d0"/><rect x="481" y="489" width="13" height="13" fill="#f5d9d0"/><rect x="493" y="489" width="13" height="13" fill="#f5d9d0"/><rect x="505" y="489" width="13" height="13" fill="#f5d9d0"/><rect x="205" y="501" width="13" height="13" fill="#ffffff"/><rect x="217" y="501" width="13" height="13" fill="#ffffff"/><rect x="229" y="501" width="13" height="13" fill="#ffffff"/><rect x="241" y="501" width="13" height="13" fill="#ffffff"/><rect x="253" y="501" width="13" height="13" fill="#ffffff"/><rect x="265" y="501" width="13" height="13" fill="#fffdfe"/><rect x="277" y="501" width="13" height="13" fill="#fefcfd"/><rect x="289" y="501" width="13" height="13" fill="#fefbfb"/><rect x="301" y="501" width="13" height="13" fill="#fef9f9"/><rect x="313" y="501" width="13" height="13" fill="#fdf7f7"/><rect x="325" y="501" width="13" height="13" fill="#fdf5f5"/><rect x="337" y="501" width="13" height="13" fill="#fdf3f2"/><rect x="349" y="501" width="13" height="13" fill="#fcf1ef"/><rect x="361" y="501" width="13" height="13" fill="#fceeec"/><rect x="373" y="501" width="13" height="13" fill="#fbece9"/><rect x="385" y="501" width="13" height="13" fill="#fae9e6"/><rect x="397" y="501" width="13" height="13" fill="#fae7e2"/><rect x="409" y="501" width="13" height="13" fill="#f9e4df"/><rect x="421" y="501" width="13" height="13" fill="#f8e2dc"/><rect x="433" y="501" width="13" height="13" fill="#f7dfd9"/><rect x="445" y="501" width="13" height="13" fill="#f6ddd5"/><rect x="457" y="501" width="13" height="13" fill="#f5dad2"/><rect x="469" y="501" width="13" height="13" fill="#f5d9d0"/><rect x="481" y="501" width="13" height="13" fill="#f5d9d0"/><rect x="493" y="501" width="13" height="13" fill="#f5d9d0"/><rect x="505" y="501" width="13" height="13" fill="#f5d9d0"/><rect x="205" y="513" width="13" height="13" fill="#ffffff"/><rect x="217" y="513" width="13" height="13" fill="#ffffff"/><rect x="229" y="513" width="13" height="13" fill="#ffffff"/><rect x="241" y="513" width="13" height="13" fill="#ffffff"/><rect x="253" y="513" width="13" height="13" fill="#ffffff"/><rect x="265" y="513" width="13" height="13" fill="#fffdfe"/><rect x="277" y="513" width="13" height="13" fill="#fefcfd"/><rect x="289" y="513" width="13" height="13" fill="#fefbfb"/><rect x="301" y="513" width="13" height="13" fill="#fef9f9"/><rect x="313" y="513" width="13" height="13" fill="#fdf7f7"/><rect x="325" y="513" width="13" height="13" fill="#fdf5f5"/><rect x="337" y="513" width="13" height="13" fill="#fdf3f2"/><rect x="349" y="513" width="13" height="13" fill="#fcf1ef"/><rect x="361" y="513" width="13" height="13" fill="#fceeec"/><rect x="373" y="513" width="13" height="13" fill="#fbece9"/><rect x="385" y="513" width="13" height="13" fill="#fae9e6"/><rect x="397" y="513" width="13" height="13" fill="#fae7e2"/><rect x="409" y="513" width="13" height="13" fill="#f9e4df"/><rect x="421" y="513" width="13" height="13" fill="#f8e2dc"/><rect x="433" y="513" width="13" height="13" fill="#f7dfd9"/><rect x="445" y="513" width="13" height="13" fill="#f6ddd5"/><rect x="457" y="513" width="13" height="13" fill="#f5dad2"/><rect x="469" y="513" width="13" height="13" fill="#f5d9d0"/><rect x="481" y="513" width="13" height="13" fill="#f5d9d0"/><rect x="493" y="513" width="13" height="13" fill="#f5d9d0"/><rect x="505" y="513" width="13" height="13" fill="#f5d9d0"/></g></g>
<path d="M212.4,152.4 C212.8,149.5 214.6,147.7 216.0,146.5 C217.4,145.3 218.8,144.8 221.1,145.2 C223.4,145.6 227.3,147.7 230.0,149.0 C232.7,150.3 234.9,152.7 237.2,153.2 C239.5,153.7 241.9,153.2 244.0,152.0 C246.1,150.8 248.2,148.5 249.5,146.0 C250.8,143.5 250.9,140.2 252.0,137.0 C253.1,133.8 253.6,129.7 256.0,127.0 C258.4,124.3 262.2,121.5 266.3,121.1 C270.4,120.7 277.2,122.4 280.9,124.7 C284.5,127.0 287.2,130.4 288.2,135.0 C289.2,139.6 288.6,145.8 286.7,152.4 C284.8,159.0 280.6,168.2 276.5,174.3 C272.4,180.4 266.4,185.7 262.0,188.9 C257.6,192.1 254.0,193.3 250.3,193.3 C246.6,193.3 244.1,191.6 240.0,188.9 C235.9,186.2 229.9,181.3 225.5,177.2 C221.1,173.1 216.0,168.2 213.8,164.1 C211.6,160.0 212.0,155.3 212.4,152.4Z" fill="#ef7b7c"/>
<path d="M299.0,172.5 C302.0,172.8 306.2,174.6 310.0,178.0 C313.8,181.4 318.2,188.3 322.0,193.0 C325.8,197.7 331.0,202.8 333.0,206.0 C335.0,209.2 335.3,210.8 334.0,212.0 C332.7,213.2 329.8,213.7 325.0,213.5 C320.2,213.3 310.8,211.4 305.0,211.0 C299.2,210.6 294.2,210.5 290.0,211.0 C285.8,211.5 282.5,212.2 280.0,214.0 C277.5,215.8 275.8,218.3 275.0,222.0 C274.2,225.7 274.5,231.3 275.0,236.0 C275.5,240.7 277.7,246.2 278.0,250.0 C278.3,253.8 278.2,257.2 277.0,259.0 C275.8,260.8 273.5,261.7 271.0,261.0 C268.5,260.3 264.8,258.0 262.0,255.0 C259.2,252.0 255.8,247.2 254.0,243.0 C252.2,238.8 250.8,234.2 251.0,230.0 C251.2,225.8 252.5,222.2 255.0,218.0 C257.5,213.8 261.5,210.3 266.0,205.0 C270.5,199.7 277.7,190.8 282.0,186.0 C286.3,181.2 289.2,178.2 292.0,176.0 C294.8,173.8 296.0,172.2 299.0,172.5Z" fill="#1f2a62"/>
<path d="M300.0,223.0 C301.7,223.0 304.2,224.5 306.0,226.0 C307.8,227.5 309.0,231.7 311.0,232.0 C313.0,232.3 315.3,228.9 318.0,228.0 C320.7,227.1 324.3,225.8 327.0,226.5 C329.7,227.2 333.5,229.4 334.0,232.0 C334.5,234.6 333.0,238.7 330.0,242.0 C327.0,245.3 320.5,249.0 316.0,252.0 C311.5,255.0 306.2,259.0 303.0,260.0 C299.8,261.0 298.7,260.0 297.0,258.0 C295.3,256.0 293.7,251.8 293.0,248.0 C292.3,244.2 292.5,238.7 293.0,235.0 C293.5,231.3 294.8,228.0 296.0,226.0 C297.2,224.0 298.3,223.0 300.0,223.0Z" fill="#ee7b7c"/>
<path d="M343.0,172.0 C343.2,169.5 344.8,165.8 347.0,164.0 C349.2,162.2 352.5,161.7 356.0,161.5 C359.5,161.3 364.5,162.8 368.0,163.0 C371.5,163.2 373.2,164.7 377.0,162.5 C380.8,160.3 386.5,154.2 391.0,150.0 C395.5,145.8 399.8,139.8 404.0,137.0 C408.2,134.2 411.8,133.7 416.0,133.0 C420.2,132.3 425.8,131.7 429.0,133.0 C432.2,134.3 434.5,137.3 435.0,141.0 C435.5,144.7 433.8,151.0 432.0,155.0 C430.2,159.0 427.7,161.5 424.0,165.0 C420.3,168.5 415.8,172.5 410.0,176.0 C404.2,179.5 395.7,184.2 389.0,186.0 C382.3,187.8 375.7,187.5 370.0,187.0 C364.3,186.5 359.0,184.3 355.0,183.0 C351.0,181.7 348.0,180.8 346.0,179.0 C344.0,177.2 342.8,174.5 343.0,172.0Z" fill="#e0762f"/>
<path d="M459.0,170.0 C459.5,167.2 459.5,165.1 461.0,163.5 C462.5,161.9 465.5,160.9 468.0,160.5 C470.5,160.1 473.5,159.9 476.0,161.0 C478.5,162.1 481.3,163.8 483.0,167.0 C484.7,170.2 485.8,173.7 486.0,180.0 C486.2,186.3 483.8,198.0 484.0,205.0 C484.2,212.0 486.0,217.0 487.0,222.0 C488.0,227.0 490.3,231.2 490.0,235.0 C489.7,238.8 487.7,243.2 485.0,245.0 C482.3,246.8 477.0,247.5 474.0,246.0 C471.0,244.5 468.8,241.2 467.0,236.0 C465.2,230.8 464.2,221.7 463.0,215.0 C461.8,208.3 460.8,201.8 460.0,196.0 C459.2,190.2 458.2,184.3 458.0,180.0 C457.8,175.7 458.5,172.8 459.0,170.0Z" fill="#2f5843"/>
<path d="M470.5,164 V479" stroke="#1a2e22" stroke-width="1"/>
<path d="M447.0,166.0 C448.4,166.1 450.2,167.3 451.0,169.0 C451.8,170.7 451.7,173.2 451.5,176.0 C451.3,178.8 450.5,182.4 450.0,186.0 C449.5,189.6 448.1,193.2 448.5,197.5 C448.9,201.8 450.8,207.2 452.3,211.6 C453.9,216.0 456.5,220.4 457.8,224.0 C459.1,227.6 460.0,230.5 460.0,233.4 C460.0,236.3 460.0,239.2 457.8,241.2 C455.6,243.2 451.3,244.4 446.9,245.2 C442.5,246.0 436.7,246.3 431.2,246.0 C425.7,245.7 417.9,244.9 414.0,243.6 C410.1,242.3 408.6,240.5 407.8,238.0 C407.0,235.5 408.4,232.6 409.4,228.7 C410.4,224.8 412.4,219.4 414.0,214.7 C415.6,210.0 416.6,205.3 418.7,200.6 C420.8,195.9 423.7,190.8 426.6,186.6 C429.5,182.4 433.4,178.6 436.0,175.6 C438.6,172.6 440.7,170.1 442.5,168.5 C444.3,166.9 445.6,165.9 447.0,166.0Z" fill="#dde9dc"/>
<path d="M396.0,202.5 C399.5,202.3 403.0,203.8 405.0,207.0 C407.0,210.2 406.7,216.0 408.0,222.0 C409.3,228.0 409.7,237.8 413.0,243.0 C416.3,248.2 424.3,249.3 428.0,253.0 C431.7,256.7 434.3,260.5 435.0,265.0 C435.7,269.5 434.2,276.2 432.0,280.0 C429.8,283.8 426.3,286.3 422.0,288.0 C417.7,289.7 410.7,290.8 406.0,290.0 C401.3,289.2 397.3,286.0 394.0,283.0 C390.7,280.0 389.3,275.2 386.0,272.0 C382.7,268.8 376.8,268.3 374.0,264.0 C371.2,259.7 369.2,252.8 369.0,246.0 C368.8,239.2 370.5,229.3 373.0,223.0 C375.5,216.7 380.2,211.4 384.0,208.0 C387.8,204.6 392.5,202.7 396.0,202.5Z" fill="#f4b941"/>
<path d="M334.0,258.0 C335.2,258.5 337.5,260.3 338.0,262.0 C338.5,263.7 338.2,265.7 337.0,268.0 C335.8,270.3 332.8,273.0 331.0,276.0 C329.2,279.0 327.7,283.8 326.0,286.0 C324.3,288.2 322.3,289.3 321.0,289.0 C319.7,288.7 318.0,286.5 318.0,284.0 C318.0,281.5 319.3,277.2 321.0,274.0 C322.7,270.8 326.3,267.5 328.0,265.0 C329.7,262.5 330.0,260.2 331.0,259.0 C332.0,257.8 332.8,257.5 334.0,258.0Z" fill="#df7331"/>
<ellipse cx="273" cy="288" rx="8" ry="16" transform="rotate(-38 273 288)" fill="#d3e8d3" opacity="0.9" filter="url(#blur2)"/>
<ellipse cx="331.5" cy="373" rx="6.5" ry="10" fill="#d3e9d3" opacity="0.95" filter="url(#blur2)"/>
<circle cx="275.2" cy="331.5" r="5" fill="#2b5840"/>
<circle cx="433.8" cy="333" r="14.5" fill="#d7ebde"/>
<path d="M268.6,356.6 C270.2,354.7 273.5,355.2 275.6,355.5 C277.8,355.8 280.6,356.9 281.5,358.6 C282.4,360.3 280.6,362.9 280.7,365.6 C280.8,368.3 280.4,372.4 281.9,375.0 C283.4,377.6 287.5,380.2 289.7,380.9 C291.9,381.5 294.7,381.2 295.2,378.9 C295.7,376.6 293.2,370.8 292.8,367.2 C292.4,363.6 292.2,359.2 292.8,357.4 C293.4,355.6 295.4,356.0 296.7,356.2 C298.0,356.4 299.6,356.4 300.6,358.6 C301.6,360.8 302.2,365.7 302.6,369.5 C303.0,373.3 303.6,378.2 303.0,381.2 C302.4,384.2 301.2,386.1 299.0,387.5 C296.8,388.9 293.3,389.9 289.7,389.8 C286.1,389.7 280.7,388.7 277.2,386.7 C273.7,384.7 270.5,381.2 268.6,378.0 C266.7,374.8 265.9,370.8 265.9,367.2 C265.9,363.6 267.0,358.6 268.6,356.6Z" fill="#f2b340"/>
<path d="M392.0,355.0 C394.7,353.9 398.2,354.5 400.0,355.5 C401.8,356.5 403.2,358.8 403.0,361.0 C402.8,363.2 401.2,366.3 399.0,369.0 C396.8,371.7 392.8,374.2 390.0,377.0 C387.2,379.8 384.8,384.0 382.0,386.0 C379.2,388.0 375.3,389.2 373.0,389.0 C370.7,388.8 368.7,387.2 368.0,385.0 C367.3,382.8 367.5,378.5 369.0,376.0 C370.5,373.5 374.5,372.3 377.0,370.0 C379.5,367.7 381.5,364.5 384.0,362.0 C386.5,359.5 389.3,356.1 392.0,355.0Z" fill="#f3b842"/>
<ellipse cx="448.5" cy="383.5" rx="10.5" ry="12" fill="#1f2a62" transform="rotate(25 448.5 383.5)"/>
<path d="M260.9,466 L262.8,453.6  C263.7,452.3 266.1,449.1 268.0,445.8 C269.9,442.5 273.7,438.0 274.0,434.0 C274.3,430.0 270.6,425.7 270.0,422.0 C269.4,418.3 269.5,414.8 270.5,412.0 C271.5,409.2 273.6,406.9 276.0,405.5 C278.4,404.1 282.0,403.4 285.0,403.3 C288.0,403.2 291.4,403.7 294.0,405.2 C296.6,406.7 299.2,409.6 300.6,412.5 C302.0,415.4 302.4,419.2 302.5,422.3 C302.6,425.4 300.8,428.6 301.0,431.0 C301.2,433.4 302.3,435.1 303.5,436.5 C304.7,437.9 306.7,439.5 308.4,439.3 C310.1,439.1 312.2,437.2 313.6,435.4 C315.0,433.6 315.0,430.3 316.5,428.5 C318.0,426.7 320.6,424.9 322.7,424.8 C324.8,424.7 327.5,426.3 329.2,427.8 C330.9,429.3 332.6,431.5 332.8,434.0 C333.0,436.5 331.0,440.7 330.5,443.0 C330.0,445.3 329.1,446.8 330.0,448.0 C330.9,449.2 333.3,450.0 336.0,450.0 C338.7,450.0 342.8,448.3 346.0,448.2 C349.2,448.1 353.1,448.2 355.3,449.5 C357.5,450.8 358.6,455.1 359.2,456.2 L359.8,466 Z" fill="#ee737a"/>
<path d="M357.0,421.5 C357.5,417.8 361.3,411.2 366.0,408.0 C370.7,404.8 378.3,403.3 385.0,402.0 C391.7,400.7 399.7,399.7 406.0,400.0 C412.3,400.3 418.2,401.0 423.0,404.0 C427.8,407.0 431.2,412.6 435.0,418.0 C438.8,423.4 443.5,431.2 446.0,436.5 C448.5,441.8 450.0,445.4 450.0,450.0 C450.0,454.6 449.2,460.6 446.0,464.0 C442.8,467.4 435.5,470.2 431.0,470.5 C426.5,470.8 423.3,468.9 419.0,466.0 C414.7,463.1 409.0,456.8 405.0,453.0 C401.0,449.2 399.0,445.8 395.0,443.0 C391.0,440.2 386.3,438.7 381.0,436.5 C375.7,434.3 367.0,432.5 363.0,430.0 C359.0,427.5 356.5,425.2 357.0,421.5Z" fill="#de7131"/>
<text x="317" y="334.5" font-family="Liberation Serif" font-weight="bold" font-size="42" fill="#2c5a3f" stroke="#2c5a3f" stroke-width="0.5" transform="translate(0 334.5) scale(1 1.1) translate(0 -334.5)" textLength="77" lengthAdjust="spacingAndGlyphs">nyla</text>
<rect x="240.5" y="164.5" width="230" height="315" fill="none" stroke="#222" stroke-opacity="0.75" stroke-width="1"/>
<circle cx="269.5" cy="229.5" r="16.5" fill="none" stroke="#e8e8e8" stroke-width="0.8" stroke-dasharray="1.5 1.5" opacity="0.85"/>
<circle cx="269.5" cy="229.5" r="4" fill="#dfe3ef" stroke="#ffffff" stroke-width="0.8"/><circle cx="269.5" cy="229.5" r="2.2" fill="none" stroke="#7d86aa" stroke-width="0.8"/>
<path d="M268,243 L268,253 L270.5,250.5 L272.5,254.5 L274,253.8 L272,250 L275.5,250 Z" fill="#111" stroke="#eee" stroke-width="0.6"/>
<rect x="272.5" y="253" width="4" height="4" fill="#f0f0f0" stroke="#333" stroke-width="0.5"/>
<circle cx="429.7" cy="210" r="2.6" fill="#b26c4a" stroke="#f0e8e0" stroke-width="0.6"/>
<circle cx="264.2" cy="447.7" r="2.5" fill="#fff" stroke="#777" stroke-width="0.7"/></svg><!--/ART-->
<!-- left toolbar -->
<div class="a" style="left:2px;top:59.5px;width:43.5px;height:6.5px;background:#3c3c3c"></div>
<div class="a" style="left:2px;top:66px;width:43.5px;height:337.5px;background:#484848;box-shadow:1px 1px 2px rgba(0,0,0,0.25)"></div><div class="a" style="left:45px;top:60px;width:1px;height:343.5px;background:#404040"></div>
<svg class="a" style="left:0;top:0" width="48" height="410" viewBox="0 0 48 410" fill="none" stroke="#c9c9c9" stroke-width="1">
<path d="M5,61 l3,3 M8,61 l-3,3" stroke="#aaa" stroke-width="0.8"/>
<path d="M36.5,61 v3 M39,61 v3" stroke="#aaa" stroke-width="1.2"/>
<path d="M17,70 h11" stroke="#3a3a3a" stroke-width="1"/>
<!-- r1 -->
<path d="M11.5,81 L18.5,87.5 L14.5,87.5 L12,91 Z" stroke-width="1"/>
<path d="M30,81 L37,87.5 L33,87.5 L30.5,91 Z" fill="#c9c9c9"/>
<!-- r2 -->
<path d="M11.5,96 L18,102 L14.5,102 L12,106 Z" fill="#c9c9c9"/>
<path d="M15,96.5 h4 M17,94.5 v4" stroke-width="1.2"/>
<path d="M28,106 L35,99" stroke-width="1.4"/><path d="M34,96 l1,2 l2,0 l-1.5,1.5" stroke-width="0.8"/>
<!-- r3 lasso / pen -->
<path d="M10,113 q2,-4 7,-3 q3,2 0,5 q-3,1 -5,-1 q-2,2 -1,5" stroke-width="1"/><path d="M14,113 L19,118 L16,118 L15,121 Z" fill="#c9c9c9" stroke-width="0.5"/>
<path d="M28,121 L29,116 L34,111 L37,114 L32,119 Z" fill="#c9c9c9" stroke-width="0.5"/><path d="M34,111 l2,-2 l3,3 l-2,2" stroke-width="1"/>
<!-- r4 curvature / T -->
<path d="M9,126 q-1,4 2,6" stroke-width="0.9"/><path d="M11,133 L13,128 L18,124 L21,127 L16,131 Z" fill="#c9c9c9" stroke-width="0.5"/>
<path d="M28,125.5 h9 v2 M28,125.5 v2 M32.5,125.5 v9 M30.5,134.5 h4" stroke-width="1.6"/>
<!-- r5 line / rect -->
<path d="M10,148 L18,140" stroke-width="1.2"/>
<rect x="27.5" y="139.5" width="10" height="8" stroke-width="1"/><path d="M28,142 h9 M28,144 h9 M28,146 h9" stroke="#888" stroke-width="0.6"/>
<path d="M20,149 l1.5,-1.5 v1.5 z M38,147 l1.5,-1.5 v1.5 z" fill="#bbb" stroke="none"/>
<!-- r6 brush / shaper -->
<path d="M10,163 q0,-3 3,-3 l5,-5 l1,1 l-5,5 q0,3 -4,2 z" fill="#c9c9c9" stroke-width="0.6"/>
<circle cx="29.5" cy="157" r="3.5" stroke-width="1"/><path d="M30,162 L38,154" stroke-width="1.4"/>
<path d="M20,164 l1.5,-1.5 v1.5 z M38,163 l1.5,-1.5 v1.5 z" fill="#bbb" stroke="none"/>
<!-- r7 eraser / rotate -->
<path d="M9.5,176 l6,-6 l4,4 l-6,6 z" fill="#c9c9c9" stroke-width="0.6"/><path d="M9.5,176 l2.5,2.5 " stroke="#555" stroke-width="1"/>
<path d="M27,174 a5,5 0 1 1 3,5" stroke-width="1.3"/><path d="M27,170 l1,4 l3,-2" stroke-width="1"/>
<path d="M20,179 l1.5,-1.5 v1.5 z M38,178 l1.5,-1.5 v1.5 z" fill="#bbb" stroke="none"/>
<!-- r8 free transform / puppet -->
<rect x="9.5" y="187.5" width="6" height="5" stroke-width="1"/><rect x="12.5" y="183.5" width="7" height="6" stroke-width="1"/>
<path d="M27,191 q3,-6 6,-3 q2,3 5,-1 M28,189 l2,-4 l3,1" stroke-width="1.4"/>
<path d="M20,194 l1.5,-1.5 v1.5 z M38,193 l1.5,-1.5 v1.5 z" fill="#bbb" stroke="none"/>
<!-- r9 pin / live paint -->
<path d="M10,206 l4,-4 M12,199 l5,-2 l2,2 l-2,5 z" fill="#c9c9c9" stroke-width="1"/>
<path d="M27,201 q4,-4 9,-1 v4 h-9 z" stroke-width="1"/><path d="M33,199 L38,204 L35,204 L34,207 Z" fill="#c9c9c9" stroke-width="0.5"/>
<path d="M20,208 l1.5,-1.5 v1.5 z M38,208 l1.5,-1.5 v1.5 z" fill="#bbb" stroke="none"/>
<!-- r10 perspective / mesh -->
<path d="M9,211 v8 h6 M11,211 v6 M9,214 h5" stroke-width="1"/>
<rect x="27.5" y="211.5" width="9" height="8" stroke-width="1"/><path d="M30,212 v7 M33,212 v7 M28,215 h8" stroke-width="0.7"/>
<!-- r11 gradient / eyedropper -->
<rect x="5" y="224" width="16" height="14" fill="#2e2e2e" stroke="none"/>
<defs><linearGradient id="tg" x1="0" x2="1"><stop offset="0" stop-color="#111"/><stop offset="1" stop-color="#ddd"/></linearGradient></defs>
<rect x="8.5" y="226.5" width="9" height="9" fill="url(#tg)" stroke="#bbb" stroke-width="1"/>
<path d="M28,236 l7,-7 M33,227 l3,-3 l2,2 l-3,3" stroke-width="1.5"/>
<path d="M38,238 l1.5,-1.5 v1.5 z" fill="#bbb" stroke="none"/>
<!-- r12 blend / symbol -->
<circle cx="12" cy="243" r="2.5" fill="#c9c9c9" stroke="none"/><circle cx="15" cy="246" r="2.5" stroke-width="1"/><circle cx="17.5" cy="248.5" r="2.2" stroke-width="1"/>
<rect x="31" y="242" width="6" height="8" rx="1" stroke-width="1"/><circle cx="34" cy="247" r="1.5" stroke-width="0.8"/><path d="M27,241 h3 M28.5,239.5 v3 M27,244 h3" stroke-width="0.7"/>
<path d="M38,252 l1.5,-1.5 v1.5 z" fill="#bbb" stroke="none"/>
<!-- r13 graph / artboard -->
<path d="M9,264 h10 M10,264 v-4 M12.5,264 v-7 M15,264 v-5 M17.5,264 v-8" stroke-width="1.2"/>
<path d="M29,256 v9 h8 v-6 l-3,-3 z M27,258 h5" stroke-width="1"/>
<!-- r14 slice / hand -->
<path d="M10,279 l5,-6 l3,-3 l1,1 l-3,4 z" fill="#c9c9c9" stroke-width="0.6"/><path d="M20,268 l1.5,-1.5 v1.5 z" fill="#bbb" stroke="none"/>
<path d="M29,277 q-3,-3 0,-4 v-4 q1,-1 2,0 v3 v-5 q1,-1 2,0 v5 v-4 q1,-1 2,0 v4 v-2 q1,-1 2,0 v4 q0,5 -4,6 q-3,0 -4,-3" fill="#c9c9c9" stroke-width="0.5"/>
<path d="M20,281 l1.5,-1.5 v1.5 z M38,281 l1.5,-1.5 v1.5 z" fill="#bbb" stroke="none"/>
<!-- r15 zoom -->
<circle cx="12.5" cy="288.5" r="3.5" stroke-width="1.1"/><path d="M15,291 l3.5,3.5" stroke-width="1.4"/>
<!-- fill stroke -->
<rect x="16" y="313" width="21" height="21" fill="#f4f0ee" stroke="none"/>
<rect x="22" y="319" width="9" height="9" fill="#4a2a30" stroke="none"/>
<path d="M16.5,333.5 L36.5,313.5" stroke="#b0202a" stroke-width="1.4"/>
<rect x="6" y="302" width="20" height="20" fill="#e7e0d3" stroke="none"/>
<path d="M34,304 q3,0 3,4 M35.5,307 l1.5,1.5 l1.5,-1.5 M34,304 l1.5,-1.5 M34,304 l1.5,1.5" stroke="#aaa" stroke-width="0.9"/>
<rect x="6.5" y="327.5" width="4" height="4" fill="#ddd" stroke="none"/><rect x="8.5" y="329.5" width="4" height="4" fill="#333" stroke="#ddd" stroke-width="0.8"/>
<!-- row modes -->
<rect x="6" y="339.5" width="9" height="9" fill="#2c2c2c" stroke="none"/><rect x="7.5" y="341" width="6" height="6" fill="#e5e2da" stroke="none"/>
<rect x="19" y="341" width="6" height="6" fill="url(#tg)" stroke="none"/>
<rect x="31.5" y="341" width="6" height="6" fill="#f0f0f0" stroke="none"/><path d="M31.5,347 L37.5,341" stroke="#b0202a" stroke-width="1"/>
<!-- draw modes -->
<rect x="5" y="354" width="10" height="9" fill="#2c2c2c" stroke="none"/>
<circle cx="9.5" cy="358" r="2.6" fill="#c9c9c9" stroke="none"/><circle cx="11" cy="359.5" r="2.2" fill="#999" stroke="none"/>
<circle cx="21.5" cy="358" r="2.4" fill="#aaa" stroke="none"/><rect x="21" y="358" width="4" height="3.5" fill="#c9c9c9" stroke="none"/>
<circle cx="34" cy="358" r="2.6" stroke-width="1"/><circle cx="33" cy="357" r="1.2" fill="#aaa" stroke="none"/>
<!-- screen mode -->
<rect x="16.5" y="371.5" width="7" height="5" fill="#6a6a6a" stroke="#c9c9c9"/><rect x="21.5" y="369" width="8" height="6" fill="#777" stroke="#c9c9c9"/>
<circle cx="19" cy="393.5" r="1.1" fill="#ddd" stroke="none"/><circle cx="22.2" cy="393.5" r="1.1" fill="#ddd" stroke="none"/><circle cx="25.4" cy="393.5" r="1.1" fill="#ddd" stroke="none"/>
</svg>

<!-- title bar contents -->
<svg class="a" style="left:0;top:0" width="1024" height="60" viewBox="0 0 1024 60" fill="none" stroke="#cfcfcf">
<circle cx="10.5" cy="11" r="4.3" fill="#e0555d" stroke="#b23a42" stroke-width="0.6"/><circle cx="10.5" cy="11" r="1.4" fill="#7a1a20" stroke="none"/>
<circle cx="22.5" cy="11" r="4.3" fill="#e6b13c" stroke="#b8892a" stroke-width="0.6"/>
<circle cx="34.5" cy="11" r="4.3" fill="#43b845" stroke="#2f8d32" stroke-width="0.6"/>
<path d="M46,11.8 L52,6.2 L58,11.8 L56,11.8 L56,16 L53.3,16 L53.3,13 L50.7,13 L50.7,16 L48,16 L48,11.8 Z" fill="#d4d4d4" stroke="none"/>
<path d="M62.5,5 v13" stroke="#383838" stroke-width="1"/>
<rect x="68" y="6.5" width="4.5" height="6" fill="#c8c8c8" stroke="none"/><rect x="73.5" y="6.5" width="5.5" height="2.5" fill="#c8c8c8" stroke="none"/><rect x="73.5" y="10" width="5.5" height="2.5" fill="#c8c8c8" stroke="none"/>
<path d="M84.5,8.5 l2,2 l2,-2" stroke-width="0.9"/>
<!-- lightbulb -->
<path d="M793,12 q-2,-2 -2,-4 a3.5,3.5 0 0 1 7,0 q0,2 -2,4 v1.5 h-3 z M793.5,15 h2" stroke="#c8c8c8" stroke-width="0.9"/>
<path d="M888,9.5 l2,2 l2,-2" stroke-width="0.9" stroke="#d8d8d8"/>
<rect x="903.5" y="5" width="116" height="12" rx="3" fill="#3b3b3b" stroke="#363636" stroke-width="0.5"/>
<circle cx="912.5" cy="10" r="2.3" stroke="#aaa" stroke-width="0.9"/><path d="M910.5,12 l-2,2 M914,13.5 h3 M915.5,13 l1,1" stroke="#aaa" stroke-width="0.8"/>
<!-- control bar -->
<rect x="69" y="26" width="11.5" height="12" fill="#e5e4d2" stroke="none"/>
<rect x="82.5" y="26" width="8.5" height="12" fill="#3f3f3f" stroke="none"/>
<path d="M85,31 l1.8,1.8 l1.8,-1.8" stroke-width="0.8"/>
<rect x="95.5" y="26" width="11.5" height="12" fill="#f5f0f0" stroke="none"/>
<path d="M96.5,37 L106,27" stroke="#5a2a35" stroke-width="1"/>
<path d="M111.5,31 l1.8,1.8 l1.8,-1.8" stroke-width="0.8"/>
<path d="M119.5,25 v14" stroke="#3e3e3e"/>
<path d="M126,36 h19" stroke="#8a8a8a" stroke-width="0.5"/>
<rect x="151" y="25" width="46" height="13" fill="#4b4b4b" stroke="#444" stroke-width="0.6"/>
<path d="M207,36 h24" stroke="#8a8a8a" stroke-width="0.5"/>
<rect x="235" y="26" width="37" height="11" fill="#3e3e3e" stroke="none"/>
<rect x="272" y="26" width="11" height="11" fill="#424242" stroke="none"/>
<path d="M276.5,29.5 l2,2 l-2,2" stroke-width="0.9"/>
<rect x="315" y="26" width="36" height="11" fill="#3e3e3e" stroke="none"/>
<rect x="351" y="26" width="11" height="11" fill="#424242" stroke="none"/>
<path d="M355,29.5 l2,2 l-2,2" stroke-width="0.9"/>
<defs>
<linearGradient id="lg1" x1="0" x2="1"><stop offset="0" stop-color="#222"/><stop offset="1" stop-color="#eee"/></linearGradient>
<radialGradient id="rg1"><stop offset="0" stop-color="#f4f4f4"/><stop offset="0.35" stop-color="#cfcfcf"/><stop offset="1" stop-color="#5a5a5a"/></radialGradient>
</defs>
<rect x="414" y="26.5" width="10" height="10.5" fill="url(#lg1)" stroke="#999" stroke-width="0.7"/>
<rect x="430" y="26.5" width="10" height="10.5" fill="url(#rg1)" stroke="#999" stroke-width="0.7"/>
<rect x="443.5" y="25" width="13" height="13.5" fill="#2e2e2e" stroke="none"/>
<rect x="445.5" y="27" width="9" height="9.5" fill="#777" stroke="#ddd" stroke-width="0.8"/>
<path d="M446.5,34 l3,-3 l2,2 l2.5,-3" stroke="#eee" stroke-width="0.8"/>
<circle cx="484.5" cy="31.5" r="3.5" fill="#d8d8d8" stroke="none"/><circle cx="484.5" cy="31.5" r="1.3" fill="#555" stroke="none"/>
<circle cx="520.5" cy="31.5" r="3.5" stroke="#c8c8c8" stroke-width="0.9"/>
<path d="M557,29 h4 v4 h-4 z M561,34 l4,-5 M563,27 v3" stroke="#c8c8c8" stroke-width="0.9"/>
<path d="M573,30 l2,2 l2,-2" stroke-width="0.9"/>
<!-- right control icons -->
<rect x="960" y="28" width="3" height="3" fill="#ccc" stroke="none"/><rect x="964.5" y="28" width="3" height="3" fill="#ccc" stroke="none"/><rect x="960" y="32.5" width="3" height="3" fill="#ccc" stroke="none"/><rect x="964.5" y="32.5" width="3" height="3" fill="#ccc" stroke="none"/>
<path d="M976,28 v8 M978,29 h3 q2,0 2,2.5 q0,2.5 -2,2.5 h-3" stroke="#ccc" stroke-width="1.1"/>
<path d="M989.5,31.5 h2" stroke="#777" stroke-width="0.6"/>
<path d="M1001,24 v14" stroke="#3e3e3e"/>
<path d="M1005,28.5 h7 M1005,31 h7 M1005,33.5 h7" stroke="#ccc" stroke-width="1"/>
<!-- tab bar -->
<path d="M7,48.5 l3,3 M10,48.5 l-3,3" stroke="#ddd" stroke-width="0.9"/>
</svg>
<div class="t" style="left:395px;top:6px;font-size:8px;line-height:10px;color:#c4c4c4;letter-spacing:0.05px">Adobe Illustrator CC 2019</div>
<div class="t" style="left:814px;top:6px;font-size:8px;line-height:10px;color:#e0e0e0;font-weight:bold">Essentials Classic</div>
<div class="t" style="left:921px;top:7px;font-size:7px;line-height:8px;color:#707070">Search Adobe Stock</div>
<div class="t" style="left:10.5px;top:27.5px;color:#c0c0c0">Color Stop</div>
<div class="t" style="left:126px;top:27.5px;color:#d0d0d0">Stroke:</div>
<div class="t" style="left:207px;top:27.5px;color:#d0d0d0">Opacity:</div>
<div class="t" style="left:238px;top:27.5px;color:#e0e0e0">100%</div>
<div class="t" style="left:290px;top:27.5px;color:#c8c8c8">Spread:</div>
<div class="t" style="left:318px;top:27.5px;color:#e0e0e0">15%</div>
<div class="t" style="left:366px;top:27.5px;color:#c8c8c8">Gradient Type:</div>
<div class="t" style="left:460px;top:27.5px;color:#a8a8a8">Draw:</div>
<div class="t" style="left:491px;top:27.5px;color:#e6e6e6">Points</div>
<div class="t" style="left:525px;top:27.5px;color:#d0d0d0">Lines</div>
<div class="t" style="left:16.4px;top:46.5px;color:#e4e4e4;font-weight:bold;font-size:7px;transform:scaleX(0.9);transform-origin:0 0">ADOBE_CREATIVECOFFEE_2019_2.ai* @ 12.5% (CMYK/GPU Preview)</div>

<!-- right panels contents -->
<svg class="a" style="left:760px;top:40px" width="264" height="400" viewBox="760 40 264 400" fill="none" stroke="#cfcfcf">
<path d="M795.5,43.5 v3 M798,43.5 v3" stroke="#9a9a9a" stroke-width="1"/>
<path d="M861.5,43.5 v3 M864,43.5 v3" stroke="#9a9a9a" stroke-width="1"/>
<path d="M1010.5,43.5 v3 M1013,43.5 v3" stroke="#9a9a9a" stroke-width="1"/>
<path d="M771.5,66 l2,-2 l2,2" stroke="#aaa" stroke-width="0.8"/>
<rect x="769.5" y="382.5" width="9" height="17" rx="4" fill="#5a5a5a" stroke="none"/>
<!-- icon column separators -->
<path d="M781,73.5 h22 M781,116.5 h22 M781,176.5 h22 M781,216.5 h22 M781,310.5 h22" stroke="#3e3e3e" stroke-width="1"/>
<!-- gradient icon -->
<defs><linearGradient id="gi" x1="0" x2="1"><stop offset="0" stop-color="#111"/><stop offset="1" stop-color="#ccc"/></linearGradient></defs>
<path d="M788,59 v10 h9 q0,-9 -9,-10 z" fill="url(#gi)" stroke="#ddd" stroke-width="0.9"/>
<!-- crown -->
<path d="M789,85 l1.5,3 l1.5,-5 l1.5,5 l1.5,-3 v7 h-6 z" fill="#c8c8c8" stroke="none"/><rect x="789" y="91" width="6" height="2" fill="#c8c8c8" stroke="none"/>
<!-- club -->
<circle cx="792" cy="101.5" r="2" fill="none" stroke="#c8c8c8" stroke-width="0.9"/><circle cx="789.5" cy="104.5" r="2" stroke="#c8c8c8" stroke-width="0.9"/><circle cx="794.5" cy="104.5" r="2" stroke="#c8c8c8" stroke-width="0.9"/><path d="M792,104 v4 M790,108.5 h4" stroke-width="0.9"/>
<!-- stroke lines -->
<path d="M787,128 h10 M787,130.5 h10 M787,133 h10" stroke="#d0d0d0" stroke-width="1"/>
<rect x="787" y="144" width="10" height="7" fill="url(#gi)" stroke="#aaa" stroke-width="0.6"/>
<circle cx="791" cy="164" r="3.5" fill="#9a9a9a" stroke="#bbb" stroke-width="0.6"/><circle cx="793.5" cy="166" r="3" fill="#6a6a6a" stroke="#999" stroke-width="0.6"/>
<circle cx="792" cy="190" r="3" fill="#d8d8d8" stroke="#aaa" stroke-width="1.6" stroke-dasharray="1 1"/>
<rect x="788.5" y="204.5" width="5" height="5" stroke="#bbb" stroke-width="0.8"/><rect x="791.5" y="201.5" width="5" height="6" fill="#4b4b4b" stroke="#ccc" stroke-width="0.9"/>
<path d="M787,230 l5,-3 l5,3 l-5,3 z" fill="#d0d0d0" stroke="none"/><path d="M787,233 l5,3 l5,-3" stroke="#d0d0d0" stroke-width="1"/>
<path d="M788.5,244.5 l7,4.5 l-7,4.5 z" fill="#c8c8c8" stroke="none"/>
<path d="M790,263.5 h4 a2,2 0 0 1 0,4 h-4 a2,2 0 0 1 0,-4 z" stroke="#c8c8c8" stroke-width="1.1"/>
<path d="M793,278 h-5 v9 h9 v-5 M792,283 l5,-5 M794,278 h3 v3" stroke="#c8c8c8" stroke-width="1"/>
<rect x="787.5" y="294.5" width="6" height="6" stroke="#bbb" stroke-width="0.9"/><rect x="790.5" y="297.5" width="6" height="6" fill="#4b4b4b" stroke="#ccc" stroke-width="0.9"/>
<!-- collapsed panel separators -->
<path d="M805,109.5 h63 M805,133.5 h63 M805,158.5 h63" stroke="#3c3c3c" stroke-width="1"/>
<!-- collapsed icons -->
<path d="M812,60.5 h2 M816,60.5 h2 M820,60.5 h0 M812,68.5 h8 M812,60 v9 M820,60 v9 M812,64.5 h8" stroke="#c8c8c8" stroke-width="1" stroke-dasharray="1.5 1"/>
<path d="M812.5,77 v9" stroke="#c8c8c8"/><rect x="813" y="78" width="5" height="3" fill="#c8c8c8" stroke="none"/><rect x="813" y="82" width="8" height="3" fill="#c8c8c8" stroke="none"/>
<rect x="812" y="94" width="5" height="5" fill="#c8c8c8" stroke="none"/><rect x="815" y="97" width="5" height="5" fill="#999" stroke="#c8c8c8" stroke-width="0.6"/>
<rect x="811.5" y="120" width="9" height="7" stroke="#c8c8c8" stroke-width="0.9"/><path d="M812,122.5 h8 M814.5,120 v7 M817,120 v7" stroke="#aaa" stroke-width="0.6"/>
<circle cx="814" cy="149" r="2.5" stroke="#c8c8c8" stroke-width="0.9"/><circle cx="817.5" cy="149" r="2.5" stroke="#c8c8c8" stroke-width="0.9"/><circle cx="816" cy="146" r="2.5" stroke="#c8c8c8" stroke-width="0.9"/><path d="M811,151 h9" stroke="#c8c8c8" stroke-width="0.9"/>
<!-- properties: transform -->
<rect x="905" y="106" width="33" height="10.5" fill="#3d3d3d" stroke="none"/>
<rect x="958" y="106" width="33" height="10.5" fill="#3d3d3d" stroke="none"/>
<rect x="905" y="122.5" width="33" height="10" fill="#3d3d3d" stroke="none"/>
<rect x="958" y="122.5" width="33" height="10" fill="#3d3d3d" stroke="none"/>
<rect x="905" y="138" width="21" height="10" fill="#3d3d3d" stroke="none"/>
<rect x="926" y="138" width="12" height="10" fill="#434343" stroke="none"/>
<path d="M929.5,142 l2,2 l2,-2" stroke-width="0.8"/>
<!-- ref point -->
<rect x="876" y="113" width="3" height="3" fill="#ddd" stroke="none"/>
<rect x="880.5" y="113.5" width="2.5" height="2.5" stroke="#bbb" stroke-width="0.6"/><rect x="884.5" y="113.5" width="2.5" height="2.5" stroke="#bbb" stroke-width="0.6"/>
<rect x="876.5" y="117.5" width="2.5" height="2.5" stroke="#bbb" stroke-width="0.6"/><rect x="880.5" y="117.5" width="2.5" height="2.5" stroke="#bbb" stroke-width="0.6"/><rect x="884.5" y="117.5" width="2.5" height="2.5" stroke="#bbb" stroke-width="0.6"/>
<rect x="876.5" y="121.5" width="2.5" height="2.5" stroke="#bbb" stroke-width="0.6"/><rect x="880.5" y="121.5" width="2.5" height="2.5" stroke="#bbb" stroke-width="0.6"/><rect x="884.5" y="121.5" width="2.5" height="2.5" stroke="#bbb" stroke-width="0.6"/>
<!-- link -->
<path d="M1001,115 q0,-2 2,-2 q2,0 2,2 v2 M1001,119 v2 q0,2 2,2 q2,0 2,-2 M1000,114 l6,9" stroke="#aaa" stroke-width="0.9"/>
<!-- angle icon -->
<path d="M894,146 h6 M894,146 l5,-5 M896.5,144 q1,1 1,2" stroke="#c8c8c8" stroke-width="0.8"/>
<!-- flip icons -->
<path d="M961,140 v6 l3,-3 z M968,140 v6 l-3,-3 z" stroke="#bbb" stroke-width="0.8" fill="#999"/>
<path d="M979,139 h6 l-3,3 z M979,147 h6 l-3,-3 z M978,143 h8" stroke="#bbb" stroke-width="0.8" fill="#999"/>
<circle cx="1006" cy="156" r="0.9" fill="#ccc" stroke="none"/><circle cx="1009" cy="156" r="0.9" fill="#ccc" stroke="none"/><circle cx="1012" cy="156" r="0.9" fill="#ccc" stroke="none"/>

<!-- appearance -->
<rect x="877" y="186" width="10" height="10" fill="#e5e4d0" stroke="none"/>
<rect x="877" y="203.5" width="10" height="10" fill="#f5f0f0" stroke="none"/><rect x="879.5" y="206" width="5" height="5" fill="#6a2030" stroke="none"/><path d="M877.5,213 L886.5,204" stroke="#c02030" stroke-width="0.9"/>
<path d="M895,213.5 h18" stroke="#aaa" stroke-width="0.5"/>
<path d="M926,207 l1.8,-1.8 l1.8,1.8 M926,211 l1.8,1.8 l1.8,-1.8" stroke-width="0.8"/>
<rect x="934" y="203.5" width="19" height="10" fill="#3d3d3d" stroke="none"/>
<rect x="953" y="203.5" width="9" height="10" fill="#444" stroke="none"/>
<path d="M956,208 l2,2 l2,-2" stroke-width="0.8"/>
<rect x="877.5" y="221.5" width="9" height="9" stroke="#888" stroke-width="0.9"/><path d="M878,222 l8,8" stroke="#777" stroke-width="0.5"/>
<path d="M895,231 h22" stroke="#aaa" stroke-width="0.5"/>
<rect x="923" y="221" width="30" height="10" fill="#3d3d3d" stroke="none"/>
<path d="M957.5,224 l2,2 l-2,2" stroke-width="0.8"/>
<circle cx="1006" cy="258" r="0.9" fill="#ccc" stroke="none"/><circle cx="1009" cy="258" r="0.9" fill="#ccc" stroke="none"/><circle cx="1012" cy="258" r="0.9" fill="#ccc" stroke="none"/>

<!-- gradient -->
<rect x="907" y="289" width="10" height="10" fill="url(#gi)" stroke="#999" stroke-width="0.6"/>
<rect x="922" y="289" width="10" height="10" fill="#888" stroke="#999" stroke-width="0.6"/><circle cx="927" cy="294" r="3" fill="#ccc" stroke="none"/>
<rect x="935" y="287.5" width="13" height="13" fill="#2e2e2e" stroke="none"/>
<rect x="937" y="289.5" width="9" height="9" fill="#777" stroke="#ddd" stroke-width="0.8"/><path d="M938,296 l2.5,-2.5 l2,2 l2.5,-3" stroke="#eee" stroke-width="0.7"/>
<circle cx="909" cy="310" r="3.2" fill="#d8d8d8" stroke="none"/><circle cx="909" cy="310" r="1.2" fill="#555" stroke="none"/>
<circle cx="941" cy="310" r="3.2" stroke="#c8c8c8" stroke-width="0.8"/>
<circle cx="1006" cy="323" r="0.9" fill="#ccc" stroke="none"/><circle cx="1009" cy="323" r="0.9" fill="#ccc" stroke="none"/><circle cx="1012" cy="323" r="0.9" fill="#ccc" stroke="none"/>
<path d="M876,330.5 h130" stroke="#444" stroke-width="0.6"/>
<path d="M876,329.5 h84" stroke="#525252" stroke-width="0.6"/>
<!-- quick action buttons -->
<rect x="876.5" y="354.5" width="60" height="12" stroke="#5e5e5e" stroke-width="0.8"/>
<rect x="943.5" y="354.5" width="61" height="12" stroke="#5e5e5e" stroke-width="0.8"/>
<rect x="876.5" y="373.5" width="128" height="12" stroke="#5e5e5e" stroke-width="0.8"/>
<rect x="876.5" y="392.5" width="128" height="12" stroke="#5e5e5e" stroke-width="0.8"/>
<rect x="876.5" y="411.5" width="113" height="12" stroke="#5e5e5e" stroke-width="0.8"/>
<rect x="990.5" y="411.5" width="14" height="12" stroke="#5e5e5e" stroke-width="0.8"/>
<path d="M995.5,416.5 l2,2 l2,-2" stroke-width="0.8"/>
</svg>
<div class="t" style="left:827px;top:60px;font-weight:bold;color:#dcdcdc">Transfor...</div>
<div class="t" style="left:827px;top:77px;font-weight:bold;color:#dcdcdc">Align</div>
<div class="t" style="left:827px;top:94px;font-weight:bold;color:#dcdcdc">Pathfinder</div>
<div class="t" style="left:827px;top:119px;font-weight:bold;color:#dcdcdc">Swatches</div>
<div class="t" style="left:827px;top:144px;font-weight:bold;color:#dcdcdc">Color</div>
<div class="t" style="left:876px;top:54px;font-weight:bold;color:#e8e8e8;transform:scaleX(0.92);transform-origin:0 0">Properties</div>
<div class="t" style="left:918px;top:54px;color:#c0c0c0">Libraries</div>
<div class="t" style="left:876px;top:73px;color:#bdbdbd">Color Stop</div>
<div class="t" style="left:876px;top:92px;color:#bdbdbd">Transform</div>
<div class="t" style="left:897px;top:107.5px;color:#aaa">X:</div>
<div class="t" style="left:908px;top:107.5px;color:#e0e0e0">394.688 r</div>
<div class="t" style="left:948.5px;top:107.5px;color:#aaa">W:</div>
<div class="t" style="left:960px;top:107.5px;color:#e0e0e0">595.003 r</div>
<div class="t" style="left:897px;top:123.5px;color:#aaa">Y:</div>
<div class="t" style="left:908px;top:123.5px;color:#e0e0e0">260.574 r</div>
<div class="t" style="left:948.5px;top:123.5px;color:#aaa">H:</div>
<div class="t" style="left:960px;top:123.5px;color:#e0e0e0">813.713 r</div>
<div class="t" style="left:907px;top:139px;color:#e0e0e0">0°</div>
<div class="t" style="left:876px;top:171px;color:#bdbdbd">Appearance</div>
<div class="t" style="left:895px;top:187px;color:#c8c8c8">Fill</div>
<div class="t" style="left:895px;top:204.5px;color:#d8d8d8">Stroke</div>
<div class="t" style="left:895px;top:222px;color:#d8d8d8">Opacity</div>
<div class="t" style="left:925px;top:222px;color:#e0e0e0">100%</div>
<div class="t" style="left:880px;top:239px;color:#aaa;font-style:italic;font-family:'Liberation Serif',serif;font-size:8px">fx.</div>
<div class="t" style="left:876px;top:273px;color:#bdbdbd">Gradient</div>
<div class="t" style="left:887px;top:290px;color:#bdbdbd">Type:</div>
<div class="t" style="left:886px;top:306px;color:#bdbdbd">Draw:</div>
<div class="t" style="left:915px;top:306px;color:#d8d8d8">Points</div>
<div class="t" style="left:947px;top:306px;color:#d8d8d8">Lines</div>
<div class="t" style="left:876px;top:341px;color:#bdbdbd">Quick Actions</div>
<div class="t" style="left:876px;top:356.5px;width:61px;text-align:center;color:#e0e0e0">Offset Path</div>
<div class="t" style="left:943px;top:356.5px;width:62px;text-align:center;color:#e0e0e0">Expand Shape</div>
<div class="t" style="left:876px;top:375.5px;width:129px;text-align:center;color:#e0e0e0">Arrange</div>
<div class="t" style="left:876px;top:394.5px;width:129px;text-align:center;color:#e0e0e0">Recolor</div>
<div class="t" style="left:876px;top:413.5px;width:114px;text-align:center;color:#e0e0e0">Start Global Edit</div>
</body></html>
